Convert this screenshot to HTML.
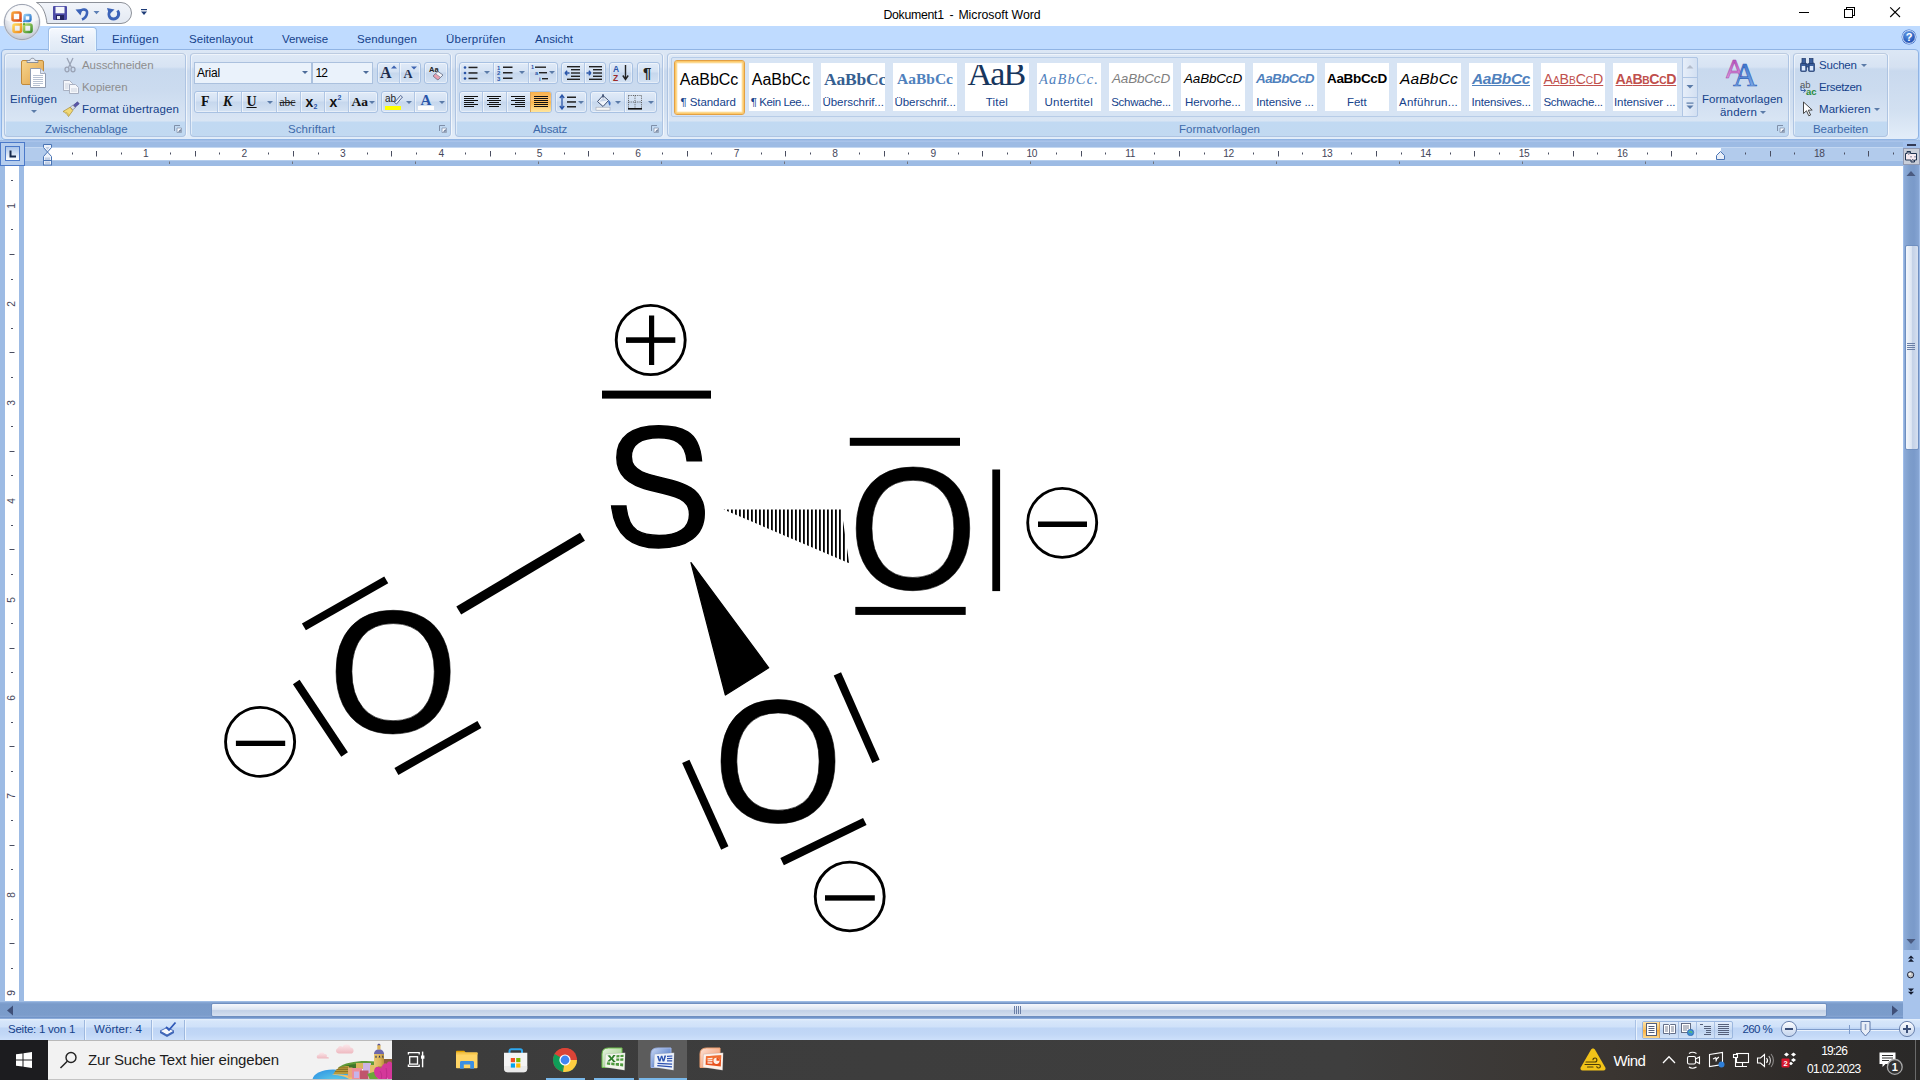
<!DOCTYPE html>
<html lang="de">
<head>
<meta charset="utf-8">
<title>Dokument1 - Microsoft Word</title>
<style>
*{box-sizing:border-box;margin:0;padding:0}
html,body{width:1920px;height:1080px;overflow:hidden;background:#fff;font-family:"Liberation Sans",sans-serif;}
.abs{position:absolute}
#root{position:relative;width:1920px;height:1080px;overflow:hidden;background:#fff}
/* title bar */
#title{position:absolute;left:0;top:0;width:1920px;height:26px;background:#fff}
#title .cap{position:absolute;left:0;width:1920px;top:6px;text-align:center;font-size:12.4px;color:#000;letter-spacing:0px}
/* tab row */
#tabrow{position:absolute;left:0;top:26px;width:1920px;height:24px;background:#bfdbff}
.tab{position:absolute;top:31px;font-size:12.3px;color:#15428b;white-space:nowrap}
#tabsel{position:absolute;left:48px;top:27px;width:48px;height:24px;border:1px solid #a4c2e6;border-bottom:none;border-radius:4px 4px 0 0;background:linear-gradient(#f1f6fc,#dfe9f6)}
/* ribbon */
#ribbon{position:absolute;left:1px;top:49px;width:1918px;height:91px;border:1px solid #8db2e3;border-radius:4px;background:linear-gradient(#dbe6f4 0,#d0def0 30%,#c7d8ed 34%,#d6e3f3 80%,#e6eefa 100%)}
.grp{position:absolute;top:53px;height:84px;border:1px solid #a9c4e4;border-radius:4px;background:linear-gradient(#dde8f6 0,#d3e0f1 16px,#c7d8ed 17px,#d9e5f4 67px,#c1d8f0 68px,#c1d8f0 100%);box-shadow:inset 1px 1px 0 rgba(255,255,255,.55), 1px 0 0 rgba(255,255,255,.6)}
.grp .lbl{position:absolute;left:0;right:0;bottom:1px;height:14px;text-align:center;font-size:11.6px;color:#3e6aaa;line-height:14px;white-space:nowrap}
.t{position:absolute;white-space:nowrap;font-size:11.6px;color:#15428b;line-height:14px}
.dis{color:#8d8d8d}
.launch{position:absolute;width:7px;height:7px;border-left:1px solid #7a8ba5;border-top:1px solid #7a8ba5}
.launch:after{content:"";position:absolute;left:2px;top:2px;width:5px;height:5px;background:linear-gradient(135deg,transparent 40%,#6d7f9b 41%);}
.btnbox{position:absolute;height:22px;border:1px solid #a8c0e0;border-radius:3px;background:linear-gradient(#dfeaf7 0,#d2e0f2 45%,#c5d6ec 50%,#d6e3f4 100%)}
.sep{position:absolute;top:0;width:1px;height:20px;background:#b4c9e6}
.dd{position:absolute;width:0;height:0;border-left:3px solid transparent;border-right:3px solid transparent;border-top:3px solid #5b7ba8}
</style>
</head>
<body>
<div id="root">
<div class="abs" style="left:0px;top:0px;width:1920px;height:26px;background:#fff;"></div>
<div class="t" style="left:883.4px;top:6.5px;height:16px;line-height:16px;font-size:12.3px;color:#000;letter-spacing:-0.280px;">Dokument1</div>
<div class="t" style="left:949.4px;top:6.5px;height:16px;line-height:16px;font-size:12.3px;color:#000;">-</div>
<div class="t" style="left:958.4px;top:6.5px;height:16px;line-height:16px;font-size:12.3px;color:#000;letter-spacing:-0.015px;">Microsoft Word</div>
<svg class="abs" style="left:1790px;top:0px" width="130" height="26" viewBox="0 0 130 26"><g stroke="#000" stroke-width="1" fill="none" shape-rendering="crispEdges"><line x1="9" y1="12.5" x2="19" y2="12.5"/><rect x="54.5" y="9.5" width="7.5" height="7.5"/><path d="M56.5 9.5V7.5H64V15H62"/></g><g stroke="#000" stroke-width="1.1" fill="none"><path d="M100.2 7.3L110 17M110 7.3L100.2 17"/></g></svg>
<div class="abs" style="left:0px;top:26px;width:1920px;height:116px;background:#bfdbff;"></div>
<svg class="abs" style="left:30px;top:0px" width="130" height="26" viewBox="0 0 130 26"><defs><linearGradient id="qg" x1="0" y1="0" x2="0" y2="1"><stop offset="0" stop-color="#f2f5fa"/><stop offset="1" stop-color="#e3e9f2"/></linearGradient></defs><path d="M6.5 2.5H91A10.5 10.5 0 0 1 91 23.5H17C16 15 13.5 6 6.5 2.5Z" fill="url(#qg)" stroke="#8d9199" stroke-width="1"/><g transform="translate(23,6)"><rect x="0" y="0" width="14" height="14" rx="1" fill="#4b4aa6"/><rect x="2.5" y="0.8" width="9" height="6.5" fill="#f4f6fb"/><rect x="3" y="9" width="8" height="5" fill="#23235f"/><rect x="4" y="10" width="3" height="3.2" fill="#e6e8f2"/></g><g fill="none" stroke="#3c63b8" stroke-width="2.6" stroke-linecap="butt"><path d="M49 12.5C52 8 58 9 57 13.5C56.5 16.5 54.5 18.5 52 19.5"/></g><path d="M45.5 9.5L52.5 9L50.5 15.5Z" fill="#3c63b8"/><path d="M63.5 11H69.5L66.5 14.2Z" fill="#5c7fb5"/><g fill="none" stroke="#3c63b8" stroke-width="2.8"><path d="M87.5 10.5C90.5 14.5 87.5 19 83.5 19C79 19 77.5 14 80.5 10.5"/></g><path d="M77 8L84.5 9.5L79 14.5Z" fill="#3c63b8"/><rect x="111" y="9" width="6" height="1.2" fill="#1e3c78"/><path d="M111 11.5H117L114 15Z" fill="#1e3c78"/></svg>
<svg class="abs" style="left:0px;top:0px" width="46" height="46" viewBox="0 0 46 46"><defs><radialGradient id="ob" cx="0.5" cy="0.35" r="0.7"><stop offset="0" stop-color="#ffffff"/><stop offset="0.55" stop-color="#eceef3"/><stop offset="1" stop-color="#b9bfcc"/></radialGradient><linearGradient id="og1" x1="0" y1="0" x2="1" y2="1"><stop offset="0" stop-color="#f7a33a"/><stop offset="1" stop-color="#d9421c"/></linearGradient><linearGradient id="og2" x1="0" y1="0" x2="1" y2="1"><stop offset="0" stop-color="#8cc7f2"/><stop offset="1" stop-color="#2a72c8"/></linearGradient><linearGradient id="og3" x1="0" y1="0" x2="1" y2="1"><stop offset="0" stop-color="#ffd75a"/><stop offset="1" stop-color="#f08a1c"/></linearGradient><linearGradient id="og4" x1="0" y1="0" x2="1" y2="1"><stop offset="0" stop-color="#b9dc6a"/><stop offset="1" stop-color="#3b8f2e"/></linearGradient></defs><circle cx="22" cy="22.5" r="18.6" fill="#d7dbe3" opacity="0.7"/><circle cx="22" cy="22" r="17.6" fill="url(#ob)" stroke="#9ca2b0" stroke-width="1"/><path d="M5.5 20A16.6 16.6 0 0 1 38.5 20C30 24 14 24 5.5 20Z" fill="#fff" opacity="0.55"/><g fill="none" stroke-width="2.6" stroke-linejoin="round"><rect x="12.5" y="12.5" width="8" height="8" rx="1.5" stroke="url(#og1)"/><rect x="24.5" y="15" width="6" height="6" rx="1.2" stroke="url(#og2)" stroke-width="2.4"/><rect x="13.5" y="24.5" width="7.5" height="7.5" rx="1.5" stroke="url(#og3)"/><rect x="24" y="24.5" width="7.5" height="7.5" rx="1.5" stroke="url(#og4)"/></g><circle cx="21" cy="21.2" r="1.1" fill="#e05a2a"/><circle cx="24" cy="21.5" r="1.1" fill="#3d86d6"/><circle cx="21.2" cy="24.2" r="1.1" fill="#f0a020"/><circle cx="24" cy="24.2" r="1.1" fill="#58a838"/></svg>
<div class="abs" style="left:1px;top:49px;width:1918px;height:91px;border:1px solid #90b4e4;border-radius:4px;background:linear-gradient(#dce7f5 0,#d5e1f1 17px,#c9d9ee 21px,#d2e0f1 60px,#dbe7f5 75px,#e4eefa 91px);box-shadow:0 1px 0 #d9f1ff, 0 2px 1px #9cb9e0"></div>
<div class="abs" style="left:48px;top:27px;width:48.5px;height:24px;border:1px solid #9dbde6;border-bottom:none;border-radius:4px 4px 0 0;background:linear-gradient(#f6f9fe,#e6eef8 60%,#dfe9f5);box-shadow:inset 1px 1px 0 #ffffff, inset -1px 0 0 #e6f6ff"></div>
<div class="t" style="left:60.5px;top:31.5px;height:15px;line-height:15px;font-size:11.5px;color:#15428b;letter-spacing:-0.213px;">Start</div>
<div class="t" style="left:112.0px;top:31.5px;height:15px;line-height:15px;font-size:11.5px;color:#15428b;letter-spacing:0.166px;">Einfügen</div>
<div class="t" style="left:189.0px;top:31.5px;height:15px;line-height:15px;font-size:11.5px;color:#15428b;letter-spacing:0.061px;">Seitenlayout</div>
<div class="t" style="left:282.0px;top:31.5px;height:15px;line-height:15px;font-size:11.5px;color:#15428b;letter-spacing:-0.082px;">Verweise</div>
<div class="t" style="left:357.0px;top:31.5px;height:15px;line-height:15px;font-size:11.5px;color:#15428b;letter-spacing:0.134px;">Sendungen</div>
<div class="t" style="left:446.0px;top:31.5px;height:15px;line-height:15px;font-size:11.5px;color:#15428b;letter-spacing:0.220px;">Überprüfen</div>
<div class="t" style="left:535.0px;top:31.5px;height:15px;line-height:15px;font-size:11.5px;color:#15428b;letter-spacing:0.042px;">Ansicht</div>
<svg class="abs" style="left:1900px;top:29px" width="18" height="16" viewBox="0 0 18 16"><defs><radialGradient id="hg" cx="0.4" cy="0.3" r="0.8"><stop offset="0" stop-color="#5f9be8"/><stop offset="1" stop-color="#1440a8"/></radialGradient></defs><circle cx="9" cy="8" r="7.4" fill="#3a6cc8"/><circle cx="9" cy="8" r="6.4" fill="url(#hg)" stroke="#eef4fd" stroke-width="0.9"/><text x="9" y="12" font-family="Liberation Sans,sans-serif" font-weight="bold" font-size="11" fill="#fff" text-anchor="middle">?</text></svg>
<div class="abs" style="left:0px;top:140px;width:1920px;height:2px;background:linear-gradient(#9fbbe3,#abc6ec);"></div>
<div class="abs" style="left:4px;top:53px;width:182px;height:84px;border:1px solid #aec4e2;border-top-color:#bccbe0;border-radius:4px;background:linear-gradient(#dee9f6 0,#d7e3f3 13px,#c8d9ee 15px,#cbdbef 36px,#d9e5f4 67px,#c1d9f2 68px,#c2d9f1 84px);box-shadow:1px 0 0 rgba(255,255,255,.65),inset 1px 1px 0 rgba(255,255,255,.5)"></div>
<div class="t" style="left:45.0px;top:121.8px;height:15px;line-height:15px;font-size:11.5px;color:#3e6aaa;letter-spacing:-0.042px;">Zwischenablage</div>
<svg class="abs" style="left:174px;top:125px" width="9" height="9" viewBox="0 0 9 9"><path d="M0.5 6V0.5H6" fill="none" stroke="#7f8fa8" stroke-width="1"/><path d="M3 3H7.5V7.5H3Z" fill="#f8fbff" stroke="#8795ad" stroke-width="0.8"/><path d="M4 6.8L6.8 4V6.8Z" fill="#5c6f90"/></svg>
<div class="abs" style="left:190px;top:53px;width:261px;height:84px;border:1px solid #aec4e2;border-top-color:#bccbe0;border-radius:4px;background:linear-gradient(#dee9f6 0,#d7e3f3 13px,#c8d9ee 15px,#cbdbef 36px,#d9e5f4 67px,#c1d9f2 68px,#c2d9f1 84px);box-shadow:1px 0 0 rgba(255,255,255,.65),inset 1px 1px 0 rgba(255,255,255,.5)"></div>
<div class="t" style="left:288.0px;top:121.8px;height:15px;line-height:15px;font-size:11.5px;color:#3e6aaa;letter-spacing:0.102px;">Schriftart</div>
<svg class="abs" style="left:439px;top:125px" width="9" height="9" viewBox="0 0 9 9"><path d="M0.5 6V0.5H6" fill="none" stroke="#7f8fa8" stroke-width="1"/><path d="M3 3H7.5V7.5H3Z" fill="#f8fbff" stroke="#8795ad" stroke-width="0.8"/><path d="M4 6.8L6.8 4V6.8Z" fill="#5c6f90"/></svg>
<div class="abs" style="left:455px;top:53px;width:208px;height:84px;border:1px solid #aec4e2;border-top-color:#bccbe0;border-radius:4px;background:linear-gradient(#dee9f6 0,#d7e3f3 13px,#c8d9ee 15px,#cbdbef 36px,#d9e5f4 67px,#c1d9f2 68px,#c2d9f1 84px);box-shadow:1px 0 0 rgba(255,255,255,.65),inset 1px 1px 0 rgba(255,255,255,.5)"></div>
<div class="t" style="left:533.0px;top:121.8px;height:15px;line-height:15px;font-size:11.5px;color:#3e6aaa;letter-spacing:-0.190px;">Absatz</div>
<svg class="abs" style="left:651px;top:125px" width="9" height="9" viewBox="0 0 9 9"><path d="M0.5 6V0.5H6" fill="none" stroke="#7f8fa8" stroke-width="1"/><path d="M3 3H7.5V7.5H3Z" fill="#f8fbff" stroke="#8795ad" stroke-width="0.8"/><path d="M4 6.8L6.8 4V6.8Z" fill="#5c6f90"/></svg>
<div class="abs" style="left:667px;top:53px;width:1122px;height:84px;border:1px solid #aec4e2;border-top-color:#bccbe0;border-radius:4px;background:linear-gradient(#dee9f6 0,#d7e3f3 13px,#c8d9ee 15px,#cbdbef 36px,#d9e5f4 67px,#c1d9f2 68px,#c2d9f1 84px);box-shadow:1px 0 0 rgba(255,255,255,.65),inset 1px 1px 0 rgba(255,255,255,.5)"></div>
<div class="t" style="left:1179.0px;top:121.8px;height:15px;line-height:15px;font-size:11.5px;color:#3e6aaa;letter-spacing:0.036px;">Formatvorlagen</div>
<svg class="abs" style="left:1777px;top:125px" width="9" height="9" viewBox="0 0 9 9"><path d="M0.5 6V0.5H6" fill="none" stroke="#7f8fa8" stroke-width="1"/><path d="M3 3H7.5V7.5H3Z" fill="#f8fbff" stroke="#8795ad" stroke-width="0.8"/><path d="M4 6.8L6.8 4V6.8Z" fill="#5c6f90"/></svg>
<div class="abs" style="left:1793px;top:53px;width:95px;height:84px;border:1px solid #aec4e2;border-top-color:#bccbe0;border-radius:4px;background:linear-gradient(#dee9f6 0,#d7e3f3 13px,#c8d9ee 15px,#cbdbef 36px,#d9e5f4 67px,#c1d9f2 68px,#c2d9f1 84px);box-shadow:1px 0 0 rgba(255,255,255,.65),inset 1px 1px 0 rgba(255,255,255,.5)"></div>
<div class="t" style="left:1813.0px;top:121.8px;height:15px;line-height:15px;font-size:11.5px;color:#3e6aaa;letter-spacing:-0.059px;">Bearbeiten</div>
<svg class="abs" style="left:19px;top:55px" width="30" height="36" viewBox="0 0 30 36"><defs><linearGradient id="cb" x1="0" y1="0" x2="1" y2="1"><stop offset="0" stop-color="#f6d58e"/><stop offset="1" stop-color="#e2a34a"/></linearGradient></defs><rect x="2.5" y="5.5" width="22" height="24" rx="1.5" fill="url(#cb)" stroke="#c08a3c" stroke-width="1"/><path d="M8 7.5V5.5H11C11 2.5 16 2.5 16 5.5H19V7.5Z" fill="#e9ecf2" stroke="#7f8794" stroke-width="0.9"/><path d="M11.5 13.5H21.5L26.5 18.5V32.5H11.5Z" fill="#fff" stroke="#8f9bb0" stroke-width="1"/><path d="M21.5 13.5V18.5H26.5" fill="#dde4ef" stroke="#8f9bb0" stroke-width="0.8"/><g stroke="#b8c2d2" stroke-width="1"><path d="M14 20.5H24M14 22.5H24M14 24.5H24M14 26.5H24M14 28.5H24M14 30.5H21"/></g></svg>
<div class="t" style="left:10.0px;top:92.0px;height:15px;line-height:15px;font-size:11.5px;color:#15428b;letter-spacing:0.203px;">Einfügen</div>
<div class="abs" style="left:30.5px;top:110px;width:0;height:0;border-left:3px solid transparent;border-right:3px solid transparent;border-top:3px solid #5b7ba8"></div>
<svg class="abs" style="left:63px;top:57px" width="14" height="16" viewBox="0 0 14 16"><g fill="none" stroke="#9aa3b5" stroke-width="1.3"><path d="M4 1L8.5 10.5M10 1L5.5 10.5"/><ellipse cx="4" cy="12.5" rx="2" ry="2.3"/><ellipse cx="10" cy="12.5" rx="2" ry="2.3"/></g></svg>
<div class="t" style="left:82.0px;top:57.5px;height:15px;line-height:15px;font-size:11.5px;color:#8e8e8e;letter-spacing:-0.060px;">Ausschneiden</div>
<svg class="abs" style="left:62px;top:79px" width="18" height="16" viewBox="0 0 18 16"><g fill="#f5f7fb" stroke="#a9b1c2" stroke-width="1"><path d="M1.5 1.5H7.5L10.5 4.5V11.5H1.5Z"/><path d="M7.5 5.5H13.5L16.5 8.5V14.5H7.5Z"/></g><g stroke="#c3cad8" stroke-width="0.8"><path d="M3 5H8M3 7H6.5M3 9H6.5M9 10H15M9 12H15"/></g></svg>
<div class="t" style="left:82.0px;top:79.5px;height:15px;line-height:15px;font-size:11.5px;color:#8e8e8e;letter-spacing:-0.064px;">Kopieren</div>
<svg class="abs" style="left:62px;top:101px" width="18" height="17" viewBox="0 0 18 17"><path d="M11 4.5L15.5 0.8L17.2 2.8L12.8 6.5Z" fill="#5a55a8" stroke="#3b3a80" stroke-width="0.6"/><path d="M8.2 6.2L11 4L13.3 6.8L10.5 9Z" fill="#d9dce6" stroke="#70788c" stroke-width="0.6"/><path d="M1 10.5L8.2 6.2L10.8 9.6L6.5 15.5C5 13 3.5 11.5 1 10.5Z" fill="#f1d978" stroke="#a88a2c" stroke-width="0.7"/><path d="M4 11L7.5 14" stroke="#c4a846" stroke-width="0.7"/></svg>
<div class="t" style="left:82.0px;top:101.5px;height:15px;line-height:15px;font-size:11.5px;color:#15428b;letter-spacing:0.108px;">Format übertragen</div>
<div class="abs" style="left:194px;top:62px;width:117.5px;height:21.5px;border:1px solid #abc1de;background:#eaf2fb;"></div>
<div class="abs" style="left:311.5px;top:62px;width:61.5px;height:21.5px;border:1px solid #abc1de;background:#eaf2fb;"></div>
<div class="t" style="left:197.0px;top:64.5px;height:16px;line-height:16px;font-size:12px;color:#000;letter-spacing:-0.203px;">Arial</div>
<div class="t" style="left:315.5px;top:64.5px;height:16px;line-height:16px;font-size:12px;color:#000;letter-spacing:-0.922px;">12</div>
<div class="abs" style="left:301.5px;top:71px;width:0;height:0;border-left:3px solid transparent;border-right:3px solid transparent;border-top:3px solid #4d6c9a"></div>
<div class="abs" style="left:362.5px;top:71px;width:0;height:0;border-left:3px solid transparent;border-right:3px solid transparent;border-top:3px solid #4d6c9a"></div>
<div class="abs" style="left:376.5px;top:62px;width:44.0px;height:21.5px;border:1px solid #a8c1e2;border-radius:3px;background:linear-gradient(#e1ebf8 0,#d3e1f3 45%,#c6d7ed 50%,#d4e2f3 100%);box-shadow:inset 0 0 0 1px rgba(255,255,255,.45)"></div>
<div class="abs" style="left:398.5px;top:63px;width:1px;height:19.5px;background:#b1c7e5;box-shadow:1px 0 0 rgba(255,255,255,.55)"></div>
<div class="t" style="left:380.0px;top:62.0px;height:21px;line-height:21px;font-size:16px;color:#1f2d4d;font-family:'Liberation Serif',serif;font-weight:bold;">A</div>
<svg class="abs" style="left:391px;top:65px" width="6" height="4" viewBox="0 0 6 4"><path d="M0 3.5L3 0.5L6 3.5Z" fill="#3d63b0"/></svg>
<div class="t" style="left:403.5px;top:65.5px;height:16px;line-height:16px;font-size:12.5px;color:#1f2d4d;font-family:'Liberation Serif',serif;font-weight:bold;">A</div>
<svg class="abs" style="left:411px;top:66px" width="6" height="4" viewBox="0 0 6 4"><path d="M0 0.5L3 3.5L6 0.5Z" fill="#3d63b0"/></svg>
<div class="abs" style="left:424px;top:62px;width:23.5px;height:21.5px;border:1px solid #a8c1e2;border-radius:3px;background:linear-gradient(#e1ebf8 0,#d3e1f3 45%,#c6d7ed 50%,#d4e2f3 100%);box-shadow:inset 0 0 0 1px rgba(255,255,255,.45)"></div>
<svg class="abs" style="left:427px;top:64px" width="18" height="18" viewBox="0 0 18 18"><text x="2" y="8" font-size="7.5" font-family="Liberation Sans,sans-serif" fill="#222" font-weight="bold">Aa</text><path d="M6 12L11 7.5L16 11L11 16Z" fill="#f4f5f8" stroke="#6f7890" stroke-width="0.9"/><path d="M6 12L8.5 9.8L13.5 13.3L11 16Z" fill="#e9a0b0" stroke="#6f7890" stroke-width="0.6"/></svg>
<div class="abs" style="left:194px;top:91px;width:183.5px;height:21.5px;border:1px solid #a8c1e2;border-radius:3px;background:linear-gradient(#e1ebf8 0,#d3e1f3 45%,#c6d7ed 50%,#d4e2f3 100%);box-shadow:inset 0 0 0 1px rgba(255,255,255,.45)"></div>
<div class="abs" style="left:217px;top:92px;width:1px;height:19.5px;background:#b1c7e5;box-shadow:1px 0 0 rgba(255,255,255,.55)"></div>
<div class="abs" style="left:240.5px;top:92px;width:1px;height:19.5px;background:#b1c7e5;box-shadow:1px 0 0 rgba(255,255,255,.55)"></div>
<div class="abs" style="left:275.5px;top:92px;width:1px;height:19.5px;background:#b1c7e5;box-shadow:1px 0 0 rgba(255,255,255,.55)"></div>
<div class="abs" style="left:299.5px;top:92px;width:1px;height:19.5px;background:#b1c7e5;box-shadow:1px 0 0 rgba(255,255,255,.55)"></div>
<div class="abs" style="left:323.5px;top:92px;width:1px;height:19.5px;background:#b1c7e5;box-shadow:1px 0 0 rgba(255,255,255,.55)"></div>
<div class="abs" style="left:347.5px;top:92px;width:1px;height:19.5px;background:#b1c7e5;box-shadow:1px 0 0 rgba(255,255,255,.55)"></div>
<div class="t" style="left:201.0px;top:93.0px;height:18px;line-height:18px;font-size:14px;color:#111;font-family:'Liberation Serif',serif;font-weight:bold;">F</div>
<div class="t" style="left:223.0px;top:93.0px;height:18px;line-height:18px;font-size:14px;color:#111;font-family:'Liberation Serif',serif;font-weight:bold;font-style:italic;">K</div>
<div class="t" style="left:246.5px;top:93.0px;height:18px;line-height:18px;font-size:14px;color:#111;font-family:'Liberation Serif',serif;font-weight:bold;text-decoration:underline;">U</div>
<div class="abs" style="left:266.5px;top:100.5px;width:0;height:0;border-left:3px solid transparent;border-right:3px solid transparent;border-top:3px solid #5b7ba8"></div>
<div class="t" style="left:279.5px;top:94.5px;height:15px;line-height:15px;font-size:11.5px;color:#222;font-family:'Liberation Serif',serif;text-decoration:line-through;">abc</div>
<div class="t" style="left:305.5px;top:93.0px;height:18px;line-height:18px;font-size:14px;color:#111;font-weight:bold;">x</div>
<div class="t" style="left:313.5px;top:101.5px;height:9px;line-height:9px;font-size:7px;color:#2a55a8;font-weight:bold;">2</div>
<div class="t" style="left:329.5px;top:93.0px;height:18px;line-height:18px;font-size:14px;color:#111;font-weight:bold;">x</div>
<div class="t" style="left:337.5px;top:92.5px;height:9px;line-height:9px;font-size:7px;color:#2a55a8;font-weight:bold;">2</div>
<div class="t" style="left:351.5px;top:93.0px;height:18px;line-height:18px;font-size:13.5px;color:#111;font-family:'Liberation Serif',serif;font-weight:bold;">Aa</div>
<div class="abs" style="left:369px;top:100.5px;width:0;height:0;border-left:3px solid transparent;border-right:3px solid transparent;border-top:3px solid #5b7ba8"></div>
<div class="abs" style="left:381px;top:91px;width:66.5px;height:21.5px;border:1px solid #a8c1e2;border-radius:3px;background:linear-gradient(#e1ebf8 0,#d3e1f3 45%,#c6d7ed 50%,#d4e2f3 100%);box-shadow:inset 0 0 0 1px rgba(255,255,255,.45)"></div>
<div class="abs" style="left:413.5px;top:92px;width:1px;height:19.5px;background:#b1c7e5;box-shadow:1px 0 0 rgba(255,255,255,.55)"></div>
<div class="t" style="left:385.0px;top:92.0px;height:13px;line-height:13px;font-size:10px;color:#222;">ab</div>
<svg class="abs" style="left:393px;top:93px" width="10" height="12" viewBox="0 0 10 12"><path d="M1.5 9.5L7.5 2.5L9.5 4L3.5 11Z" fill="#e8eef8" stroke="#4a5f8a" stroke-width="0.9"/></svg>
<div class="abs" style="left:385px;top:106px;width:16px;height:4px;background:#ffff00;"></div>
<div class="abs" style="left:405.5px;top:100.5px;width:0;height:0;border-left:3px solid transparent;border-right:3px solid transparent;border-top:3px solid #5b7ba8"></div>
<div class="t" style="left:420.5px;top:89.5px;height:20px;line-height:20px;font-size:15px;color:#2a55a8;font-family:'Liberation Serif',serif;font-weight:bold;">A</div>
<div class="abs" style="left:418px;top:106px;width:16px;height:4px;background:#fdfdfd;box-shadow:0 0 0 0.5px #d5dfef"></div>
<div class="abs" style="left:438.5px;top:100.5px;width:0;height:0;border-left:3px solid transparent;border-right:3px solid transparent;border-top:3px solid #5b7ba8"></div>
<div class="abs" style="left:459px;top:62px;width:98.5px;height:21.5px;border:1px solid #a8c1e2;border-radius:3px;background:linear-gradient(#e1ebf8 0,#d3e1f3 45%,#c6d7ed 50%,#d4e2f3 100%);box-shadow:inset 0 0 0 1px rgba(255,255,255,.45)"></div>
<div class="abs" style="left:492.5px;top:63px;width:1px;height:19.5px;background:#b1c7e5;box-shadow:1px 0 0 rgba(255,255,255,.55)"></div>
<div class="abs" style="left:527.5px;top:63px;width:1px;height:19.5px;background:#b1c7e5;box-shadow:1px 0 0 rgba(255,255,255,.55)"></div>
<svg class="abs" style="left:463px;top:65px" width="16" height="16" viewBox="0 0 16 16"><circle cx="2" cy="2.5" r="1.3" fill="#2a55a8"/><rect x="5.5" y="1.7" width="9" height="1.5" fill="#222"/><circle cx="2" cy="8" r="1.3" fill="#2a55a8"/><rect x="5.5" y="7.2" width="9" height="1.5" fill="#222"/><circle cx="2" cy="13.5" r="1.3" fill="#2a55a8"/><rect x="5.5" y="12.7" width="9" height="1.5" fill="#222"/></svg>
<div class="abs" style="left:483.5px;top:71px;width:0;height:0;border-left:3px solid transparent;border-right:3px solid transparent;border-top:3px solid #5b7ba8"></div>
<svg class="abs" style="left:497px;top:64px" width="18" height="18" viewBox="0 0 18 18"><text x="0" y="5.7" font-size="6" font-weight="bold" font-family="Liberation Sans,sans-serif" fill="#2a55a8">1</text><rect x="6" y="2.5" width="9.5" height="1.5" fill="#222"/><text x="0" y="11.2" font-size="6" font-weight="bold" font-family="Liberation Sans,sans-serif" fill="#2a55a8">2</text><rect x="6" y="8" width="9.5" height="1.5" fill="#222"/><text x="0" y="16.7" font-size="6" font-weight="bold" font-family="Liberation Sans,sans-serif" fill="#2a55a8">3</text><rect x="6" y="13.5" width="9.5" height="1.5" fill="#222"/></svg>
<div class="abs" style="left:518.5px;top:71px;width:0;height:0;border-left:3px solid transparent;border-right:3px solid transparent;border-top:3px solid #5b7ba8"></div>
<svg class="abs" style="left:531px;top:64px" width="20" height="18" viewBox="0 0 20 18"><text x="0" y="5" font-size="5.5" font-weight="bold" font-family="Liberation Sans,sans-serif" fill="#2a55a8">1</text><rect x="4" y="2.5" width="11" height="1.4" fill="#222"/><text x="4" y="11" font-size="5.5" font-weight="bold" font-family="Liberation Sans,sans-serif" fill="#2a55a8">a</text><rect x="8" y="8" width="8" height="1.4" fill="#222"/><text x="8" y="17" font-size="5.5" font-weight="bold" font-family="Liberation Sans,sans-serif" fill="#2a55a8">i</text><rect x="11" y="14" width="6" height="1.4" fill="#222"/></svg>
<div class="abs" style="left:548.5px;top:71px;width:0;height:0;border-left:3px solid transparent;border-right:3px solid transparent;border-top:3px solid #5b7ba8"></div>
<div class="abs" style="left:561px;top:62px;width:44.5px;height:21.5px;border:1px solid #a8c1e2;border-radius:3px;background:linear-gradient(#e1ebf8 0,#d3e1f3 45%,#c6d7ed 50%,#d4e2f3 100%);box-shadow:inset 0 0 0 1px rgba(255,255,255,.45)"></div>
<div class="abs" style="left:583.5px;top:63px;width:1px;height:19.5px;background:#b1c7e5;box-shadow:1px 0 0 rgba(255,255,255,.55)"></div>
<svg class="abs" style="left:564px;top:65px" width="18" height="16" viewBox="0 0 18 16"><path d="M5.5 8L1 8M1 8L3.2 5.8M1 8L3.2 10.2" stroke="#2a55a8" stroke-width="1.4" fill="none"/><rect x="3" y="1" width="13" height="1.4" fill="#222"/><rect x="7" y="4" width="9" height="1.4" fill="#222"/><rect x="7" y="7.3" width="9" height="1.4" fill="#222"/><rect x="7" y="10.6" width="9" height="1.4" fill="#222"/><rect x="3" y="13.6" width="13" height="1.4" fill="#222"/></svg>
<svg class="abs" style="left:586px;top:65px" width="18" height="16" viewBox="0 0 18 16"><path d="M0.5 8L5 8M5 8L2.8 5.8M5 8L2.8 10.2" stroke="#2a55a8" stroke-width="1.4" fill="none"/><rect x="3" y="1" width="13" height="1.4" fill="#222"/><rect x="7" y="4" width="9" height="1.4" fill="#222"/><rect x="7" y="7.3" width="9" height="1.4" fill="#222"/><rect x="7" y="10.6" width="9" height="1.4" fill="#222"/><rect x="3" y="13.6" width="13" height="1.4" fill="#222"/></svg>
<div class="abs" style="left:609px;top:62px;width:23.5px;height:21.5px;border:1px solid #a8c1e2;border-radius:3px;background:linear-gradient(#e1ebf8 0,#d3e1f3 45%,#c6d7ed 50%,#d4e2f3 100%);box-shadow:inset 0 0 0 1px rgba(255,255,255,.45)"></div>
<div class="t" style="left:613.0px;top:63.5px;height:10px;line-height:10px;font-size:8.5px;color:#2a55a8;font-weight:bold;">A</div>
<div class="t" style="left:613.0px;top:72.5px;height:10px;line-height:10px;font-size:8.5px;color:#9c2a2a;font-weight:bold;">Z</div>
<svg class="abs" style="left:622px;top:65px" width="8" height="16" viewBox="0 0 8 16"><path d="M3.5 0V14M0.8 10.5L3.5 14.5L6.2 10.5" fill="none" stroke="#222" stroke-width="1.4"/></svg>
<div class="abs" style="left:637px;top:62px;width:23px;height:21.5px;border:1px solid #a8c1e2;border-radius:3px;background:linear-gradient(#e1ebf8 0,#d3e1f3 45%,#c6d7ed 50%,#d4e2f3 100%);box-shadow:inset 0 0 0 1px rgba(255,255,255,.45)"></div>
<div class="t" style="left:643.0px;top:62.5px;height:20px;line-height:20px;font-size:15px;color:#222;font-weight:bold;">¶</div>
<div class="abs" style="left:459px;top:91px;width:92.5px;height:21.5px;border:1px solid #a8c1e2;border-radius:3px;background:linear-gradient(#e1ebf8 0,#d3e1f3 45%,#c6d7ed 50%,#d4e2f3 100%);box-shadow:inset 0 0 0 1px rgba(255,255,255,.45)"></div>
<div class="abs" style="left:482px;top:92px;width:1px;height:19.5px;background:#b1c7e5;box-shadow:1px 0 0 rgba(255,255,255,.55)"></div>
<div class="abs" style="left:505.5px;top:92px;width:1px;height:19.5px;background:#b1c7e5;box-shadow:1px 0 0 rgba(255,255,255,.55)"></div>
<div class="abs" style="left:529.5px;top:92px;width:21px;height:19.5px;background:linear-gradient(#f8b04a,#fcc577 40%,#fbb84e 50%,#ffe59c);border-left:1px solid #d9a257;border-radius:0 2px 2px 0"></div>
<svg class="abs" style="left:464px;top:96px" width="14" height="13" viewBox="0 0 14 13"><rect x="0" y="0" width="14" height="1" fill="#111" shape-rendering="crispEdges"/><rect x="0" y="2" width="10" height="1" fill="#111" shape-rendering="crispEdges"/><rect x="0" y="4" width="14" height="1" fill="#111" shape-rendering="crispEdges"/><rect x="0" y="6" width="10" height="1" fill="#111" shape-rendering="crispEdges"/><rect x="0" y="8" width="14" height="1" fill="#111" shape-rendering="crispEdges"/><rect x="0" y="10" width="10" height="1" fill="#111" shape-rendering="crispEdges"/></svg>
<svg class="abs" style="left:487px;top:96px" width="14" height="13" viewBox="0 0 14 13"><rect x="0" y="0" width="14" height="1" fill="#111" shape-rendering="crispEdges"/><rect x="2" y="2" width="10" height="1" fill="#111" shape-rendering="crispEdges"/><rect x="0" y="4" width="14" height="1" fill="#111" shape-rendering="crispEdges"/><rect x="2" y="6" width="10" height="1" fill="#111" shape-rendering="crispEdges"/><rect x="0" y="8" width="14" height="1" fill="#111" shape-rendering="crispEdges"/><rect x="2" y="10" width="10" height="1" fill="#111" shape-rendering="crispEdges"/></svg>
<svg class="abs" style="left:511px;top:96px" width="14" height="13" viewBox="0 0 14 13"><rect x="0" y="0" width="14" height="1" fill="#111" shape-rendering="crispEdges"/><rect x="4" y="2" width="10" height="1" fill="#111" shape-rendering="crispEdges"/><rect x="0" y="4" width="14" height="1" fill="#111" shape-rendering="crispEdges"/><rect x="4" y="6" width="10" height="1" fill="#111" shape-rendering="crispEdges"/><rect x="0" y="8" width="14" height="1" fill="#111" shape-rendering="crispEdges"/><rect x="4" y="10" width="10" height="1" fill="#111" shape-rendering="crispEdges"/></svg>
<svg class="abs" style="left:534px;top:96px" width="14" height="13" viewBox="0 0 14 13"><rect x="0" y="0" width="14" height="1" fill="#111" shape-rendering="crispEdges"/><rect x="0" y="2" width="14" height="1" fill="#111" shape-rendering="crispEdges"/><rect x="0" y="4" width="14" height="1" fill="#111" shape-rendering="crispEdges"/><rect x="0" y="6" width="14" height="1" fill="#111" shape-rendering="crispEdges"/><rect x="0" y="8" width="14" height="1" fill="#111" shape-rendering="crispEdges"/><rect x="0" y="10" width="14" height="1" fill="#111" shape-rendering="crispEdges"/></svg>
<div class="abs" style="left:555px;top:91px;width:32px;height:21.5px;border:1px solid #a8c1e2;border-radius:3px;background:linear-gradient(#e1ebf8 0,#d3e1f3 45%,#c6d7ed 50%,#d4e2f3 100%);box-shadow:inset 0 0 0 1px rgba(255,255,255,.45)"></div>
<svg class="abs" style="left:559px;top:94px" width="22" height="16" viewBox="0 0 22 16"><path d="M3 1.5V14.5M0.8 4L3 1L5.2 4M0.8 12L3 15L5.2 12" fill="none" stroke="#2a55a8" stroke-width="1.3"/><rect x="8" y="2.5" width="9" height="1.5" fill="#222"/><rect x="8" y="7.2" width="9" height="1.5" fill="#222"/><rect x="8" y="12" width="9" height="1.5" fill="#222"/></svg>
<div class="abs" style="left:577.5px;top:100.5px;width:0;height:0;border-left:3px solid transparent;border-right:3px solid transparent;border-top:3px solid #5b7ba8"></div>
<div class="abs" style="left:590px;top:91px;width:66.5px;height:21.5px;border:1px solid #a8c1e2;border-radius:3px;background:linear-gradient(#e1ebf8 0,#d3e1f3 45%,#c6d7ed 50%,#d4e2f3 100%);box-shadow:inset 0 0 0 1px rgba(255,255,255,.45)"></div>
<div class="abs" style="left:623.5px;top:92px;width:1px;height:19.5px;background:#b1c7e5;box-shadow:1px 0 0 rgba(255,255,255,.55)"></div>
<svg class="abs" style="left:594px;top:93px" width="20" height="18" viewBox="0 0 20 18"><path d="M3.5 8.5L9 2.5L14.5 7.5L9 13.5Z" fill="#f3f6fb" stroke="#3a4c70" stroke-width="1"/><path d="M5 8.8L9.2 4.4L13 7.7Z" fill="#c9d6ea"/><path d="M9 4.5V1.2" stroke="#3a4c70" stroke-width="1.6"/><path d="M14.3 7.3C17.3 8.5 16.8 11.5 15.8 12.8C14.5 11.5 14.2 9.5 14.3 7.3Z" fill="#3f6fc0"/><rect x="2" y="14.2" width="14" height="3" fill="#f4f4f4" stroke="#a0a8b8" stroke-width="0.6"/></svg>
<div class="abs" style="left:614.5px;top:100.5px;width:0;height:0;border-left:3px solid transparent;border-right:3px solid transparent;border-top:3px solid #5b7ba8"></div>
<svg class="abs" style="left:628px;top:95px" width="15" height="16" viewBox="0 0 15 16"><g stroke="#555" stroke-width="1" stroke-dasharray="1 1.2" fill="none"><path d="M0.5 0.5H13.5M0.5 0.5V13M13.5 0.5V13M7 0.5V13M0.5 7H13.5"/></g><rect x="0" y="13" width="14" height="1.6" fill="#111"/></svg>
<div class="abs" style="left:647.5px;top:100.5px;width:0;height:0;border-left:3px solid transparent;border-right:3px solid transparent;border-top:3px solid #5b7ba8"></div>
<div class="abs" style="left:671px;top:57px;width:1027px;height:60px;border:1px solid #b7cce7;background:#d7e4f4;border-radius:2px"></div>
<div class="abs" style="left:674px;top:59.5px;width:70.5px;height:55.5px;border-radius:3px;border:1px solid #e2a044;background:#fff;box-shadow:inset 0 0 0 1.5px #fcc96b, inset 0 0 0 2.5px #fde9b9"></div>
<div class="abs" style="left:677px;top:63px;width:64px;height:30px;overflow:hidden"><div class="t" style="left:2.8px;top:5.5px;height:21px;line-height:21px;font-size:16px;color:#000;letter-spacing:-0.036px;">AaBbCc</div></div>
<div class="t" style="left:680.5px;top:94.5px;height:15px;line-height:15px;font-size:11.5px;color:#15428b;letter-spacing:-0.075px;">¶ Standard</div>
<div class="abs" style="left:749px;top:63px;width:64px;height:48px;background:#fff;"></div>
<div class="abs" style="left:749px;top:63px;width:64px;height:30px;overflow:hidden"><div class="t" style="left:2.8px;top:5.5px;height:21px;line-height:21px;font-size:16px;color:#000;letter-spacing:-0.036px;">AaBbCc</div></div>
<div class="t" style="left:750.8px;top:94.5px;height:15px;line-height:15px;font-size:11.5px;color:#15428b;letter-spacing:-0.427px;">¶ Kein Lee...</div>
<div class="abs" style="left:821px;top:63px;width:64px;height:48px;background:#fff;"></div>
<div class="abs" style="left:821px;top:63px;width:64px;height:30px;overflow:hidden"><div class="t" style="left:3.0px;top:4.5px;height:23px;line-height:23px;font-size:17.5px;color:#365f91;font-family:'Liberation Serif',serif;font-weight:bold;letter-spacing:-0.201px;">AaBbCc</div></div>
<div class="t" style="left:822.5px;top:94.5px;height:15px;line-height:15px;font-size:11.5px;color:#15428b;letter-spacing:-0.054px;">Überschrif...</div>
<div class="abs" style="left:893px;top:63px;width:64px;height:48px;background:#fff;"></div>
<div class="abs" style="left:893px;top:63px;width:64px;height:30px;overflow:hidden"><div class="t" style="left:4.0px;top:6.0px;height:20px;line-height:20px;font-size:15.5px;color:#4f81bd;font-family:'Liberation Serif',serif;font-weight:bold;letter-spacing:0.005px;">AaBbCc</div></div>
<div class="t" style="left:894.5px;top:94.5px;height:15px;line-height:15px;font-size:11.5px;color:#15428b;letter-spacing:-0.054px;">Überschrif...</div>
<div class="abs" style="left:965px;top:63px;width:64px;height:48px;background:#fff;"></div>
<div class="abs" style="left:965px;top:65px;width:64px;height:28px;overflow:hidden"><div class="t" style="left:2.5px;top:-11.5px;height:40px;line-height:40px;font-size:34px;color:#17365d;font-family:'Liberation Serif',serif;letter-spacing:-1.771px;">AaB</div></div>
<div class="t" style="left:985.8px;top:94.5px;height:15px;line-height:15px;font-size:11.5px;color:#15428b;letter-spacing:0.188px;">Titel</div>
<div class="abs" style="left:1037px;top:63px;width:64px;height:48px;background:#fff;"></div>
<div class="abs" style="left:1037px;top:63px;width:64px;height:30px;overflow:hidden"><div class="t" style="left:2.0px;top:6.5px;height:19px;line-height:19px;font-size:14.5px;color:#4f81bd;font-family:'Liberation Serif',serif;font-style:italic;letter-spacing:1.150px;">AaBbCc.</div></div>
<div class="t" style="left:1044.5px;top:94.5px;height:15px;line-height:15px;font-size:11.5px;color:#15428b;letter-spacing:0.250px;">Untertitel</div>
<div class="abs" style="left:1109px;top:63px;width:64px;height:48px;background:#fff;"></div>
<div class="abs" style="left:1109px;top:63px;width:64px;height:30px;overflow:hidden"><div class="t" style="left:3.0px;top:7.0px;height:18px;line-height:18px;font-size:13.5px;color:#7f7f7f;font-style:italic;letter-spacing:-0.183px;">AaBbCcD</div></div>
<div class="t" style="left:1111.2px;top:94.5px;height:15px;line-height:15px;font-size:11.5px;color:#15428b;letter-spacing:-0.283px;">Schwache...</div>
<div class="abs" style="left:1181px;top:63px;width:64px;height:48px;background:#fff;"></div>
<div class="abs" style="left:1181px;top:63px;width:64px;height:30px;overflow:hidden"><div class="t" style="left:3.0px;top:7.0px;height:18px;line-height:18px;font-size:13.5px;color:#000;font-style:italic;letter-spacing:-0.183px;">AaBbCcD</div></div>
<div class="t" style="left:1185.0px;top:94.5px;height:15px;line-height:15px;font-size:11.5px;color:#15428b;letter-spacing:-0.122px;">Hervorhe...</div>
<div class="abs" style="left:1253px;top:63px;width:64px;height:48px;background:#fff;"></div>
<div class="abs" style="left:1253px;top:63px;width:64px;height:30px;overflow:hidden"><div class="t" style="left:3.0px;top:7.0px;height:18px;line-height:18px;font-size:13.5px;color:#4f81bd;font-weight:bold;font-style:italic;letter-spacing:-0.612px;">AaBbCcD</div></div>
<div class="t" style="left:1256.2px;top:94.5px;height:15px;line-height:15px;font-size:11.5px;color:#15428b;letter-spacing:-0.096px;">Intensive ...</div>
<div class="abs" style="left:1325px;top:63px;width:64px;height:48px;background:#fff;"></div>
<div class="abs" style="left:1325px;top:63px;width:64px;height:30px;overflow:hidden"><div class="t" style="left:2.0px;top:7.0px;height:18px;line-height:18px;font-size:13.5px;color:#000;font-weight:bold;letter-spacing:-0.326px;">AaBbCcD</div></div>
<div class="t" style="left:1347.0px;top:94.5px;height:15px;line-height:15px;font-size:11.5px;color:#15428b;letter-spacing:-0.074px;">Fett</div>
<div class="abs" style="left:1397px;top:63px;width:64px;height:48px;background:#fff;"></div>
<div class="abs" style="left:1397px;top:63px;width:64px;height:30px;overflow:hidden"><div class="t" style="left:3.0px;top:6.0px;height:20px;line-height:20px;font-size:15.5px;color:#000;font-style:italic;letter-spacing:0.188px;">AaBbCc</div></div>
<div class="t" style="left:1399.0px;top:94.5px;height:15px;line-height:15px;font-size:11.5px;color:#15428b;letter-spacing:0.254px;">Anführun...</div>
<div class="abs" style="left:1469px;top:63px;width:64px;height:48px;background:#fff;"></div>
<div class="abs" style="left:1469px;top:63px;width:64px;height:30px;overflow:hidden"><div class="t" style="left:3.0px;top:6.0px;height:20px;line-height:20px;font-size:15.5px;color:#4f81bd;font-weight:bold;font-style:italic;letter-spacing:-0.380px;text-decoration:underline;">AaBbCc</div></div>
<div class="t" style="left:1471.4px;top:94.5px;height:15px;line-height:15px;font-size:11.5px;color:#15428b;letter-spacing:-0.155px;">Intensives...</div>
<div class="abs" style="left:1541px;top:63px;width:64px;height:48px;background:#fff;"></div>
<div class="abs" style="left:1541px;top:63px;width:64px;height:30px;overflow:hidden"><div class="t" style="left:2.5px;top:6px;height:20px;line-height:20px;color:#c0504d;text-decoration:underline;font-size:10.2px;letter-spacing:-0.1px"><span style="font-size:14.2px">A</span>A<span style="font-size:14.2px">B</span>B<span style="font-size:14.2px">C</span>C<span style="font-size:14.2px">D</span></div></div>
<div class="t" style="left:1543.4px;top:94.5px;height:15px;line-height:15px;font-size:11.5px;color:#15428b;letter-spacing:-0.301px;">Schwache...</div>
<div class="abs" style="left:1613px;top:63px;width:64px;height:48px;background:#fff;"></div>
<div class="abs" style="left:1613px;top:63px;width:64px;height:30px;overflow:hidden"><div class="t" style="left:2.5px;top:6px;height:20px;line-height:20px;color:#c0504d;text-decoration:underline;font-weight:bold;font-size:10.2px;letter-spacing:-0.35px"><span style="font-size:14.2px">A</span>A<span style="font-size:14.2px">B</span>B<span style="font-size:14.2px">C</span>C<span style="font-size:14.2px">D</span></div></div>
<div class="t" style="left:1614.0px;top:94.5px;height:15px;line-height:15px;font-size:11.5px;color:#15428b;letter-spacing:-0.091px;">Intensiver ...</div>
<div class="abs" style="left:1682px;top:57px;width:16px;height:60px;border:1px solid #b0c6e4;background:linear-gradient(90deg,#e6eef9,#d3e0f2);border-radius:0 2px 2px 0"></div>
<div class="abs" style="left:1683px;top:76.5px;width:14px;height:1px;background:#b0c6e4;"></div>
<div class="abs" style="left:1683px;top:96.5px;width:14px;height:1px;background:#b0c6e4;"></div>
<svg class="abs" style="left:1686px;top:64px" width="8" height="6" viewBox="0 0 8 6"><path d="M0.5 4.5L4 1L7.5 4.5Z" fill="#b3bccb"/></svg>
<svg class="abs" style="left:1686px;top:84px" width="8" height="6" viewBox="0 0 8 6"><path d="M0.5 1L4 4.5L7.5 1Z" fill="#5b7ba8"/></svg>
<svg class="abs" style="left:1686px;top:102px" width="8" height="9" viewBox="0 0 8 9"><rect x="0.5" y="0.5" width="7" height="1.2" fill="#5b7ba8"/><path d="M0.5 3.5L4 7L7.5 3.5Z" fill="#5b7ba8"/></svg>
<svg class="abs" style="left:1724px;top:56px" width="36" height="32" viewBox="0 0 36 32"><defs><linearGradient id="aa1" x1="0" y1="0" x2="0" y2="1"><stop offset="0" stop-color="#b044b8"/><stop offset="1" stop-color="#e6a5e0"/></linearGradient><linearGradient id="aa2" x1="0" y1="0" x2="0" y2="1"><stop offset="0" stop-color="#2f66c4"/><stop offset="1" stop-color="#8db8ee"/></linearGradient></defs><text x="2" y="22" font-family="Liberation Sans,sans-serif" font-size="25" fill="url(#aa1)" stroke="#a040a8" stroke-width="0.5">A</text><text x="9" y="30" font-family="Liberation Serif,serif" font-size="33" fill="url(#aa2)" stroke="#2a5cb8" stroke-width="0.6">A</text></svg>
<div class="t" style="left:1702.0px;top:91.5px;height:15px;line-height:15px;font-size:11.5px;color:#15428b;letter-spacing:0.014px;">Formatvorlagen</div>
<div class="t" style="left:1720.0px;top:104.5px;height:15px;line-height:15px;font-size:11.5px;color:#15428b;letter-spacing:0.203px;">ändern</div>
<div class="abs" style="left:1759.5px;top:111px;width:0;height:0;border-left:3px solid transparent;border-right:3px solid transparent;border-top:3px solid #5b7ba8"></div>
<svg class="abs" style="left:1799px;top:57px" width="18" height="16" viewBox="0 0 18 16"><g fill="#3b5f9c" stroke="#1f3868" stroke-width="0.7"><rect x="1.5" y="6" width="6" height="8.5" rx="1"/><rect x="9.5" y="6" width="6" height="8.5" rx="1"/><rect x="3" y="1.5" width="3.5" height="5"/><rect x="10.5" y="1.5" width="3.5" height="5"/><rect x="7" y="7" width="3" height="3"/></g><rect x="2.8" y="9" width="3.4" height="4.5" fill="#dce8fa"/><rect x="10.8" y="9" width="3.4" height="4.5" fill="#dce8fa"/></svg>
<div class="t" style="left:1819.0px;top:57.5px;height:15px;line-height:15px;font-size:11.5px;color:#15428b;letter-spacing:-0.214px;">Suchen</div>
<div class="abs" style="left:1861px;top:64px;width:0;height:0;border-left:3px solid transparent;border-right:3px solid transparent;border-top:3px solid #5b7ba8"></div>
<div class="t" style="left:1800.0px;top:78.5px;height:11px;line-height:11px;font-size:9.5px;color:#555;">ab</div>
<div class="t" style="left:1806.0px;top:85.5px;height:11px;line-height:11px;font-size:9.5px;color:#2a8a3c;font-weight:bold;">ac</div>
<svg class="abs" style="left:1800px;top:86px" width="7" height="8" viewBox="0 0 7 8"><path d="M1 0V4.5H5.5M3.5 2.5L5.8 4.5L3.5 6.5" fill="none" stroke="#3b62a8" stroke-width="1"/></svg>
<div class="t" style="left:1819.0px;top:79.5px;height:15px;line-height:15px;font-size:11.5px;color:#15428b;letter-spacing:-0.357px;">Ersetzen</div>
<svg class="abs" style="left:1802px;top:101px" width="12" height="16" viewBox="0 0 12 16"><path d="M1.5 1L1.5 12.5L4.5 9.8L6.8 14.8L8.6 14L6.3 9.2L10.2 9Z" fill="#fff" stroke="#333" stroke-width="0.9" stroke-linejoin="round"/></svg>
<div class="t" style="left:1819.0px;top:101.5px;height:15px;line-height:15px;font-size:11.5px;color:#15428b;letter-spacing:0.066px;">Markieren</div>
<div class="abs" style="left:1874px;top:108px;width:0;height:0;border-left:3px solid transparent;border-right:3px solid transparent;border-top:3px solid #5b7ba8"></div>
<div class="abs" style="left:0px;top:142px;width:1920px;height:859px;background:#9dbbe4;"></div>
<div class="abs" style="left:24px;top:166px;width:1879px;height:835px;background:#fff;"></div>
<div class="abs" style="left:24px;top:147px;width:1879px;height:1px;background:#c4d8f2;"></div>
<div class="abs" style="left:24px;top:148px;width:1879px;height:12px;background:#b2cbec;"></div>
<div class="abs" style="left:47px;top:148px;width:1674px;height:12px;background:#fff;"></div>
<div class="abs" style="left:24px;top:160px;width:1879px;height:1px;background:#c4d8f2;opacity:.6"></div>
<div class="t" style="left:143.0px;top:148.0px;height:12px;line-height:12px;font-size:10.2px;color:#45465a;letter-spacing:-0.397px;">1</div>
<div class="t" style="left:241.5px;top:148.0px;height:12px;line-height:12px;font-size:10.2px;color:#45465a;letter-spacing:-0.397px;">2</div>
<div class="t" style="left:339.9px;top:148.0px;height:12px;line-height:12px;font-size:10.2px;color:#45465a;letter-spacing:-0.397px;">3</div>
<div class="t" style="left:438.4px;top:148.0px;height:12px;line-height:12px;font-size:10.2px;color:#45465a;letter-spacing:-0.397px;">4</div>
<div class="t" style="left:536.8px;top:148.0px;height:12px;line-height:12px;font-size:10.2px;color:#45465a;letter-spacing:-0.397px;">5</div>
<div class="t" style="left:635.3px;top:148.0px;height:12px;line-height:12px;font-size:10.2px;color:#45465a;letter-spacing:-0.397px;">6</div>
<div class="t" style="left:733.7px;top:148.0px;height:12px;line-height:12px;font-size:10.2px;color:#45465a;letter-spacing:-0.397px;">7</div>
<div class="t" style="left:832.2px;top:148.0px;height:12px;line-height:12px;font-size:10.2px;color:#45465a;letter-spacing:-0.397px;">8</div>
<div class="t" style="left:930.6px;top:148.0px;height:12px;line-height:12px;font-size:10.2px;color:#45465a;letter-spacing:-0.397px;">9</div>
<div class="t" style="left:1026.4px;top:148.0px;height:12px;line-height:12px;font-size:10.2px;color:#45465a;letter-spacing:-0.397px;">10</div>
<div class="t" style="left:1125.2px;top:148.0px;height:12px;line-height:12px;font-size:10.2px;color:#45465a;letter-spacing:-0.371px;">11</div>
<div class="t" style="left:1223.3px;top:148.0px;height:12px;line-height:12px;font-size:10.2px;color:#45465a;letter-spacing:-0.397px;">12</div>
<div class="t" style="left:1321.8px;top:148.0px;height:12px;line-height:12px;font-size:10.2px;color:#45465a;letter-spacing:-0.397px;">13</div>
<div class="t" style="left:1420.2px;top:148.0px;height:12px;line-height:12px;font-size:10.2px;color:#45465a;letter-spacing:-0.397px;">14</div>
<div class="t" style="left:1518.7px;top:148.0px;height:12px;line-height:12px;font-size:10.2px;color:#45465a;letter-spacing:-0.397px;">15</div>
<div class="t" style="left:1617.1px;top:148.0px;height:12px;line-height:12px;font-size:10.2px;color:#45465a;letter-spacing:-0.397px;">16</div>
<div class="t" style="left:1814.0px;top:148.0px;height:12px;line-height:12px;font-size:10.2px;color:#45465a;letter-spacing:-0.397px;">18</div>
<svg class="abs" style="left:0px;top:0px" width="1920" height="170" viewBox="0 0 1920 170"><rect x="72" y="152.5" width="1" height="2" fill="#4a4e60"/><rect x="96" y="151" width="1" height="5.5" fill="#4a4e60"/><rect x="121" y="152.5" width="1" height="2" fill="#4a4e60"/><rect x="170" y="152.5" width="1" height="2" fill="#4a4e60"/><rect x="195" y="151" width="1" height="5.5" fill="#4a4e60"/><rect x="219" y="152.5" width="1" height="2" fill="#4a4e60"/><rect x="268" y="152.5" width="1" height="2" fill="#4a4e60"/><rect x="293" y="151" width="1" height="5.5" fill="#4a4e60"/><rect x="318" y="152.5" width="1" height="2" fill="#4a4e60"/><rect x="367" y="152.5" width="1" height="2" fill="#4a4e60"/><rect x="391" y="151" width="1" height="5.5" fill="#4a4e60"/><rect x="416" y="152.5" width="1" height="2" fill="#4a4e60"/><rect x="465" y="152.5" width="1" height="2" fill="#4a4e60"/><rect x="490" y="151" width="1" height="5.5" fill="#4a4e60"/><rect x="515" y="152.5" width="1" height="2" fill="#4a4e60"/><rect x="564" y="152.5" width="1" height="2" fill="#4a4e60"/><rect x="588" y="151" width="1" height="5.5" fill="#4a4e60"/><rect x="613" y="152.5" width="1" height="2" fill="#4a4e60"/><rect x="662" y="152.5" width="1" height="2" fill="#4a4e60"/><rect x="687" y="151" width="1" height="5.5" fill="#4a4e60"/><rect x="711" y="152.5" width="1" height="2" fill="#4a4e60"/><rect x="761" y="152.5" width="1" height="2" fill="#4a4e60"/><rect x="785" y="151" width="1" height="5.5" fill="#4a4e60"/><rect x="810" y="152.5" width="1" height="2" fill="#4a4e60"/><rect x="859" y="152.5" width="1" height="2" fill="#4a4e60"/><rect x="884" y="151" width="1" height="5.5" fill="#4a4e60"/><rect x="908" y="152.5" width="1" height="2" fill="#4a4e60"/><rect x="958" y="152.5" width="1" height="2" fill="#4a4e60"/><rect x="982" y="151" width="1" height="5.5" fill="#4a4e60"/><rect x="1007" y="152.5" width="1" height="2" fill="#4a4e60"/><rect x="1056" y="152.5" width="1" height="2" fill="#4a4e60"/><rect x="1081" y="151" width="1" height="5.5" fill="#4a4e60"/><rect x="1105" y="152.5" width="1" height="2" fill="#4a4e60"/><rect x="1154" y="152.5" width="1" height="2" fill="#4a4e60"/><rect x="1179" y="151" width="1" height="5.5" fill="#4a4e60"/><rect x="1204" y="152.5" width="1" height="2" fill="#4a4e60"/><rect x="1253" y="152.5" width="1" height="2" fill="#4a4e60"/><rect x="1278" y="151" width="1" height="5.5" fill="#4a4e60"/><rect x="1302" y="152.5" width="1" height="2" fill="#4a4e60"/><rect x="1351" y="152.5" width="1" height="2" fill="#4a4e60"/><rect x="1376" y="151" width="1" height="5.5" fill="#4a4e60"/><rect x="1401" y="152.5" width="1" height="2" fill="#4a4e60"/><rect x="1450" y="152.5" width="1" height="2" fill="#4a4e60"/><rect x="1474" y="151" width="1" height="5.5" fill="#4a4e60"/><rect x="1499" y="152.5" width="1" height="2" fill="#4a4e60"/><rect x="1548" y="152.5" width="1" height="2" fill="#4a4e60"/><rect x="1573" y="151" width="1" height="5.5" fill="#4a4e60"/><rect x="1597" y="152.5" width="1" height="2" fill="#4a4e60"/><rect x="1647" y="152.5" width="1" height="2" fill="#4a4e60"/><rect x="1671" y="151" width="1" height="5.5" fill="#4a4e60"/><rect x="1696" y="152.5" width="1" height="2" fill="#4a4e60"/><rect x="1745" y="152.5" width="1" height="2" fill="#4a4e60"/><rect x="1770" y="151" width="1" height="5.5" fill="#4a4e60"/><rect x="1794" y="152.5" width="1" height="2" fill="#4a4e60"/><rect x="1844" y="152.5" width="1" height="2" fill="#4a4e60"/><rect x="1868" y="151" width="1" height="5.5" fill="#4a4e60"/><rect x="1893" y="152.5" width="1" height="2" fill="#4a4e60"/><rect x="169" y="161.5" width="1" height="2.5" fill="#72757f"/><rect x="292" y="161.5" width="1" height="2.5" fill="#72757f"/><rect x="415" y="161.5" width="1" height="2.5" fill="#72757f"/><rect x="538" y="161.5" width="1" height="2.5" fill="#72757f"/><rect x="661" y="161.5" width="1" height="2.5" fill="#72757f"/><rect x="784" y="161.5" width="1" height="2.5" fill="#72757f"/><rect x="907" y="161.5" width="1" height="2.5" fill="#72757f"/><rect x="1030" y="161.5" width="1" height="2.5" fill="#72757f"/><rect x="1153" y="161.5" width="1" height="2.5" fill="#72757f"/><rect x="1276" y="161.5" width="1" height="2.5" fill="#72757f"/><rect x="1399" y="161.5" width="1" height="2.5" fill="#72757f"/><rect x="1522" y="161.5" width="1" height="2.5" fill="#72757f"/><rect x="1645" y="161.5" width="1" height="2.5" fill="#72757f"/><g fill="#eef3fb" stroke="#4a74b4" stroke-width="1"><path d="M43.5 144.5H51.5V147.5L47.5 152L43.5 147.5Z"/><path d="M43.5 160.5V156.5L47.5 152L51.5 156.5V160.5Z"/><rect x="43.5" y="160.5" width="8" height="4.5"/></g><path d="M45.5 147H49.5L47.5 150Z M45 157.5H50V160H45Z M45 161.5H50V164H45Z" fill="#c2d0e6"/><path d="M1716.5 159.5V155.5L1720.5 151.5L1724.5 155.5V159.5Z" fill="#e8eef8" stroke="#4a74b4" stroke-width="1"/></svg>
<div class="abs" style="left:0;top:142px;width:25px;height:24px;border:1px solid #4b79c9;background:#b5cdee"></div>
<div class="abs" style="left:5px;top:146px;width:15px;height:15px;border:1px solid #4b79c9;background:linear-gradient(#a9c4ea,#ffffff)"></div>
<svg class="abs" style="left:9px;top:150px" width="8" height="9" viewBox="0 0 8 9"><path d="M1.5 0.5V6.5H7" fill="none" stroke="#16294d" stroke-width="2"/></svg>
<div class="abs" style="left:5px;top:166px;width:14px;height:835px;background:#fff;"></div>
<div class="t" style="left:2px;top:199.8px;width:20px;height:12px;line-height:12px;font-size:10.2px;color:#45465a;text-align:center;transform:rotate(-90deg)">1</div>
<div class="t" style="left:2px;top:298.2px;width:20px;height:12px;line-height:12px;font-size:10.2px;color:#45465a;text-align:center;transform:rotate(-90deg)">2</div>
<div class="t" style="left:2px;top:396.7px;width:20px;height:12px;line-height:12px;font-size:10.2px;color:#45465a;text-align:center;transform:rotate(-90deg)">3</div>
<div class="t" style="left:2px;top:495.1px;width:20px;height:12px;line-height:12px;font-size:10.2px;color:#45465a;text-align:center;transform:rotate(-90deg)">4</div>
<div class="t" style="left:2px;top:593.5px;width:20px;height:12px;line-height:12px;font-size:10.2px;color:#45465a;text-align:center;transform:rotate(-90deg)">5</div>
<div class="t" style="left:2px;top:692.0px;width:20px;height:12px;line-height:12px;font-size:10.2px;color:#45465a;text-align:center;transform:rotate(-90deg)">6</div>
<div class="t" style="left:2px;top:790.4px;width:20px;height:12px;line-height:12px;font-size:10.2px;color:#45465a;text-align:center;transform:rotate(-90deg)">7</div>
<div class="t" style="left:2px;top:888.9px;width:20px;height:12px;line-height:12px;font-size:10.2px;color:#45465a;text-align:center;transform:rotate(-90deg)">8</div>
<div class="t" style="left:2px;top:987.4px;width:20px;height:12px;line-height:12px;font-size:10.2px;color:#45465a;text-align:center;transform:rotate(-90deg)">9</div>
<svg class="abs" style="left:0px;top:0px" width="24" height="1001" viewBox="0 0 24 1001"><rect x="11" y="180" width="2" height="1" fill="#4a4e60"/><rect x="11" y="229" width="2" height="1" fill="#4a4e60"/><rect x="9.5" y="254" width="5" height="1" fill="#4a4e60"/><rect x="11" y="279" width="2" height="1" fill="#4a4e60"/><rect x="11" y="328" width="2" height="1" fill="#4a4e60"/><rect x="9.5" y="352" width="5" height="1" fill="#4a4e60"/><rect x="11" y="377" width="2" height="1" fill="#4a4e60"/><rect x="11" y="426" width="2" height="1" fill="#4a4e60"/><rect x="9.5" y="451" width="5" height="1" fill="#4a4e60"/><rect x="11" y="475" width="2" height="1" fill="#4a4e60"/><rect x="11" y="525" width="2" height="1" fill="#4a4e60"/><rect x="9.5" y="549" width="5" height="1" fill="#4a4e60"/><rect x="11" y="574" width="2" height="1" fill="#4a4e60"/><rect x="11" y="623" width="2" height="1" fill="#4a4e60"/><rect x="9.5" y="648" width="5" height="1" fill="#4a4e60"/><rect x="11" y="672" width="2" height="1" fill="#4a4e60"/><rect x="11" y="722" width="2" height="1" fill="#4a4e60"/><rect x="9.5" y="746" width="5" height="1" fill="#4a4e60"/><rect x="11" y="771" width="2" height="1" fill="#4a4e60"/><rect x="11" y="820" width="2" height="1" fill="#4a4e60"/><rect x="9.5" y="845" width="5" height="1" fill="#4a4e60"/><rect x="11" y="869" width="2" height="1" fill="#4a4e60"/><rect x="11" y="919" width="2" height="1" fill="#4a4e60"/><rect x="9.5" y="943" width="5" height="1" fill="#4a4e60"/><rect x="11" y="968" width="2" height="1" fill="#4a4e60"/></svg>
<div class="abs" style="left:1903px;top:142px;width:17px;height:859px;background:linear-gradient(90deg,#a8c5f0 0,#8cabd8 1.5px,#7d9dcb 7px,#7a9aca 11px,#85a4d2 15.5px,#a8c5f0 17px);"></div>
<div class="abs" style="left:1903px;top:142px;width:17px;height:6px;background:#a3c1ee;"></div>
<div class="abs" style="left:1907px;top:144px;width:9px;height:2px;background:#333a55;"></div>
<div class="abs" style="left:1903px;top:148px;width:17px;height:17px;border:1px solid #929ab2;background:#c9ced9"></div>
<svg class="abs" style="left:1904px;top:150px" width="15" height="13" viewBox="0 0 15 13"><path d="M1.5 3.5H3V1.5H6.5V3.5H12.5V10H10.5V12H7V10H1.5Z" fill="#f6eaf1" stroke="#1f3350" stroke-width="1"/><path d="M3.5 2.5L4.7 4.5L6 2.5Z M7.5 11L8.7 9L10 11Z" fill="#fff" stroke="#1f3350" stroke-width="0.6"/><path d="M7 6V7.5M11 6V7.5" stroke="#55607a" stroke-width="0.9"/></svg>
<svg class="abs" style="left:1906px;top:170px" width="10" height="7" viewBox="0 0 10 7"><path d="M0.5 6L5 1L9.5 6Z" fill="#4a5a80"/></svg>
<svg class="abs" style="left:1906px;top:938px" width="10" height="7" viewBox="0 0 10 7"><path d="M0.5 1L5 6L9.5 1Z" fill="#4a5a80"/></svg>
<div class="abs" style="left:1904.5px;top:245px;width:14px;height:205px;border:1px solid #6f8fc0;border-radius:2px;background:linear-gradient(90deg,#f4f7fc 0,#dde6f3 45%,#c3d1e6 55%,#d6e0f0 100%)"></div>
<svg class="abs" style="left:1907px;top:343px" width="9" height="9" viewBox="0 0 9 9"><g stroke="#6b7fa6" stroke-width="1"><path d="M0 0.5H8M0 2.5H8M0 4.5H8M0 6.5H8"/></g></svg>
<div class="abs" style="left:1903px;top:950px;width:17px;height:51px;background:#a8c4ec;"></div>
<svg class="abs" style="left:1907px;top:955px" width="8" height="8" viewBox="0 0 8 8"><path d="M4 0.5L7 3.5H1ZM4 3.8L7 6.8H1Z" fill="#151c30"/></svg>
<svg class="abs" style="left:1906px;top:970px" width="10" height="10" viewBox="0 0 10 10"><circle cx="4.6" cy="4.8" r="3.1" fill="#c4c4c4" stroke="#1c2238" stroke-width="1"/><circle cx="3.8" cy="4" r="1.2" fill="#f2f2f2"/></svg>
<svg class="abs" style="left:1907px;top:988px" width="8" height="8" viewBox="0 0 8 8"><path d="M1 0.5H7L4 3.5ZM1 3.8H7L4 6.8Z" fill="#151c30"/></svg>
<div class="abs" style="left:0px;top:1001px;width:1903px;height:18px;background:linear-gradient(#a9c5ea 0,#86a6d4 1.5px,#7a9bca 3px,#7b9ccb 14px,#86a5d2 16px,#5e84c0 17px,#bcd4f3 18px);"></div>
<div class="abs" style="left:1903px;top:1001px;width:17px;height:18px;background:#a8c4ec;"></div>
<svg class="abs" style="left:6px;top:1005px" width="8" height="11" viewBox="0 0 8 11"><path d="M7 0.5L1 5.5L7 10.5Z" fill="#3f4f78"/></svg>
<svg class="abs" style="left:1891px;top:1005px" width="8" height="11" viewBox="0 0 8 11"><path d="M1 0.5L7 5.5L1 10.5Z" fill="#3f4f78"/></svg>
<div class="abs" style="left:211px;top:1003px;width:1616px;height:14px;border:1px solid #6f8fc0;border-radius:2px;background:linear-gradient(#f4f7fc 0,#dde6f3 45%,#c3d1e6 55%,#d6e0f0 100%)"></div>
<svg class="abs" style="left:1014px;top:1006px" width="9" height="9" viewBox="0 0 9 9"><g stroke="#6b7fa6" stroke-width="1"><path d="M0.5 0V8M2.5 0V8M4.5 0V8M6.5 0V8"/></g></svg>
<!-- diagram -->
<svg class="abs" style="left:0;top:0" width="1920" height="1080" viewBox="0 0 1920 1080">
<defs>
<pattern id="hatch" x="723" y="0" width="4" height="10" patternUnits="userSpaceOnUse"><rect x="0" y="0" width="1.8" height="10" fill="#000"/></pattern>
</defs>
<g fill="#000" stroke="#000" stroke-width="17" stroke-linejoin="miter">
<defs><path id="gS" d="M1272 389Q1272 194 1119.5 87.0Q967 -20 690 -20Q150 -20 93 478L276 478Q300 262 414.0 188.5Q518 129 697 129Q882 129 982.5 192.5Q1083 256 1083 379Q1083 448 1051.5 491.0Q1020 534 963.0 562.0Q906 590 827.0 609.0Q748 628 652 650Q485 687 398.5 724.0Q312 761 262.0 806.5Q212 852 185.5 913.0Q159 974 159 1053Q159 1234 297.5 1332.0Q436 1430 694 1430Q934 1430 1061.0 1356.5Q1215 1270 1237 1013L1053 1013Q1036 1175 933.0 1235.5Q846 1286 692 1286Q523 1286 434.0 1230.0Q345 1174 345 1063Q345 998 379.5 955.5Q414 913 479.0 883.5Q544 854 738 811Q803 796 867.5 780.5Q932 765 991.0 743.5Q1050 722 1101.5 693.0Q1153 664 1191.0 622.0Q1229 580 1250.5 523.0Q1272 466 1272 389Z"/><path id="gO" d="M1495 711Q1495 490 1410.5 324.0Q1326 158 1168.0 69.0Q1010 -20 795 -20Q578 -20 420.5 68.0Q263 156 180.0 322.5Q97 489 97 711Q97 1049 282.0 1239.5Q467 1430 797 1430Q1012 1430 1170.0 1344.5Q1328 1259 1411.5 1096.0Q1495 933 1495 711ZM1300 711Q1300 974 1168.5 1124.0Q1037 1274 797 1274Q555 1274 423.0 1126.0Q291 978 291 711Q291 446 424.5 290.5Q558 135 795 135Q1039 135 1169.5 285.5Q1300 436 1300 711Z"/></defs>
<use href="#gS" stroke-width="17.2" transform="matrix(0.07863 0 0 -0.08438 604.29 546.36)"/>
<use href="#gO" stroke-width="7.2" transform="matrix(0.08119 0 0 -0.08531 848.32 588.99)"/>
<use href="#gO" stroke-width="7.2" transform="matrix(0.08165 0 0 -0.08528 328.13 732.24)"/>
<use href="#gO" stroke-width="7.2" transform="matrix(0.08155 0 0 -0.08545 713.09 821.79)"/>
</g>
<!-- plus circle -->
<ellipse cx="650.7" cy="340" rx="34.5" ry="34.7" fill="none" stroke="#000" stroke-width="2.85"/>
<rect x="649" y="315.5" width="5.2" height="49.5" fill="#000"/>
<rect x="626" y="337.3" width="49.3" height="5.6" fill="#000"/>
<!-- bar above S -->
<rect x="602" y="390.6" width="109" height="8" fill="#000"/>
<!-- hashed wedge -->
<polygon points="723.5,509.6 841.4,509.6 849.2,563.2" fill="url(#hatch)"/>
<!-- right O bars -->
<rect x="849.8" y="437.8" width="110.2" height="8" fill="#000"/>
<rect x="855.3" y="606.9" width="110.4" height="8" fill="#000"/>
<rect x="992.3" y="469.5" width="7.8" height="121.6" fill="#000"/>
<ellipse cx="1062.2" cy="522.8" rx="34.5" ry="34.5" fill="none" stroke="#000" stroke-width="2.85"/>
<rect x="1038" y="521.5" width="49" height="5.5" fill="#000"/>
<!-- S-O bond left -->
<g stroke="#000" fill="none" stroke-linecap="butt">
<line x1="458.75" y1="610.5" x2="582.5" y2="536.75" stroke-width="9.5"/>
<line x1="303.9" y1="626.9" x2="386.25" y2="579.9" stroke-width="8"/>
<line x1="396.4" y1="771.4" x2="479.4" y2="724.4" stroke-width="8"/>
<line x1="296.25" y1="682" x2="344.6" y2="754.5" stroke-width="8"/>
<!-- bottom O bars -->
<line x1="837.4" y1="673.9" x2="876" y2="761.3" stroke-width="8"/>
<line x1="685.8" y1="761.3" x2="724.8" y2="848" stroke-width="8"/>
<line x1="782.1" y1="861.7" x2="864.8" y2="821.5" stroke-width="8"/>
</g>
<ellipse cx="260.1" cy="741.85" rx="34.55" ry="34.5" fill="none" stroke="#000" stroke-width="2.85"/>
<rect x="235.9" y="740.7" width="49.3" height="5.3" fill="#000"/>
<!-- solid wedge -->
<polygon points="691,562.6 768.7,667.8 725.4,695" fill="#000" stroke="#000" stroke-width="1.3" stroke-linejoin="round"/>
<ellipse cx="849.7" cy="896.45" rx="34.5" ry="34.4" fill="none" stroke="#000" stroke-width="2.85"/>
<rect x="825" y="895.25" width="49.8" height="5.4" fill="#000"/>
</svg>
<div class="abs" style="left:0px;top:1019px;width:1920px;height:21px;background:linear-gradient(#e6f0fd 0,#d6e6fa 2px,#cfe1f9 8px,#bed5f5 9px,#c1d7f6 15px,#cde0fa 21px);"></div>
<div class="t" style="left:8.0px;top:1022.0px;height:15px;line-height:15px;font-size:11.5px;color:#15428b;letter-spacing:-0.233px;">Seite: 1 von 1</div>
<div class="t" style="left:94.0px;top:1022.0px;height:15px;line-height:15px;font-size:11.5px;color:#15428b;letter-spacing:0.083px;">Wörter: 4</div>
<div class="abs" style="left:84px;top:1020px;width:1px;height:20px;background:#9db8df;"></div>
<div class="abs" style="left:85px;top:1020px;width:1px;height:20px;background:#e9f2fd;"></div>
<div class="abs" style="left:151px;top:1020px;width:1px;height:20px;background:#9db8df;"></div>
<div class="abs" style="left:152px;top:1020px;width:1px;height:20px;background:#e9f2fd;"></div>
<div class="abs" style="left:184px;top:1020px;width:1px;height:20px;background:#9db8df;"></div>
<div class="abs" style="left:185px;top:1020px;width:1px;height:20px;background:#e9f2fd;"></div>
<svg class="abs" style="left:158px;top:1021px" width="20" height="18" viewBox="0 0 20 18"><path d="M2 10L9 6.5L16 10L9 14Z" fill="#f6f8fc" stroke="#4d6fb8" stroke-width="1"/><path d="M2 10V12L9 16L16 12V10L9 14Z" fill="#3f66b8"/><path d="M8 6L11 9L17.5 1.5" fill="none" stroke="#3059b8" stroke-width="1.8"/></svg>
<div class="abs" style="left:1636px;top:1020px;width:1px;height:20px;background:#e9f2fd;"></div>
<div class="abs" style="left:1635px;top:1020px;width:1px;height:20px;background:#a9c2e6;"></div>
<div class="abs" style="left:1642px;top:1020.5px;width:91px;height:18px;border:1px solid #9ab6de;border-radius:2px;background:linear-gradient(#e4eefb,#c6d9f3 50%,#bdd3f1 51%,#d2e2f7)"></div>
<div class="abs" style="left:1643px;top:1021.5px;width:17px;height:16px;background:linear-gradient(#fde3a8,#fbc15c 50%,#f9ad3a 51%,#fdd98c);border-right:1px solid #d9a257"></div>
<div class="abs" style="left:1678px;top:1021.5px;width:1px;height:16px;background:#a9c1e4;"></div>
<div class="abs" style="left:1696px;top:1021.5px;width:1px;height:16px;background:#a9c1e4;"></div>
<div class="abs" style="left:1714px;top:1021.5px;width:1px;height:16px;background:#a9c1e4;"></div>
<svg class="abs" style="left:1645px;top:1023px" width="14" height="13" viewBox="0 0 14 13"><rect x="1.5" y="0.5" width="10" height="12" fill="#fff" stroke="#55607a" stroke-width="1"/><path d="M3.5 3.5H9.5M3.5 5.5H9.5M3.5 7.5H9.5M3.5 9.5H9.5" stroke="#55607a" stroke-width="1"/></svg>
<svg class="abs" style="left:1663px;top:1023px" width="14" height="13" viewBox="0 0 14 13"><path d="M0.5 1.5H5.5L6.5 2.5L7.5 1.5H12.5V10.5H7.5L6.5 11.5L5.5 10.5H0.5Z" fill="#fff" stroke="#55607a" stroke-width="0.9"/><path d="M6.5 2.5V11.5M2 4H5M2 6H5M2 8H5M8 4H11M8 6H11M8 8H11" stroke="#55607a" stroke-width="0.8"/></svg>
<svg class="abs" style="left:1681px;top:1023px" width="14" height="13" viewBox="0 0 14 13"><rect x="0.5" y="0.5" width="9" height="9" fill="#fff" stroke="#55607a" stroke-width="0.9"/><path d="M2 3H8M2 5H8M2 7H6" stroke="#55607a" stroke-width="0.8"/><circle cx="9.5" cy="9.5" r="3.2" fill="#3d8fd8" stroke="#2a5a9a" stroke-width="0.6"/><path d="M8 9.5C9 8 10.5 8.5 11 10" stroke="#5cc06a" stroke-width="1.2" fill="none"/></svg>
<svg class="abs" style="left:1699px;top:1023px" width="14" height="13" viewBox="0 0 14 13"><path d="M1 1.5H4M5 3.5H12M5 5.5H12M7 7.5H12M7 9.5H12M5 11.5H12" stroke="#55607a" stroke-width="1"/></svg>
<svg class="abs" style="left:1717px;top:1023px" width="14" height="13" viewBox="0 0 14 13"><path d="M1 1.5H12M1 3.5H12M1 5.5H12M1 7.5H12M1 9.5H12M1 11.5H12" stroke="#55607a" stroke-width="1"/></svg>
<div class="t" style="left:1742.5px;top:1022.0px;height:15px;line-height:15px;font-size:11.5px;color:#15428b;letter-spacing:-0.616px;">260 %</div>
<div class="abs" style="left:1797px;top:1029px;width:102px;height:1px;background:#7f9ccb;"></div>
<div class="abs" style="left:1797px;top:1030px;width:102px;height:1px;background:#eaf2fd;"></div>
<div class="abs" style="left:1849px;top:1025px;width:1px;height:9px;background:#7f9ccb;"></div>
<svg class="abs" style="left:1780px;top:1020px" width="18" height="18" viewBox="0 0 18 18"><defs><linearGradient id="zg" x1="0" y1="0" x2="0" y2="1"><stop offset="0" stop-color="#ffffff"/><stop offset="0.5" stop-color="#dfe8f6"/><stop offset="1" stop-color="#c3d3ec"/></linearGradient></defs><circle cx="9" cy="9" r="7.6" fill="url(#zg)" stroke="#6a82ad" stroke-width="1"/><rect x="5" y="8" width="8" height="2" fill="#3b4f78"/></svg>
<svg class="abs" style="left:1898px;top:1020px" width="18" height="18" viewBox="0 0 18 18"><defs><linearGradient id="zg" x1="0" y1="0" x2="0" y2="1"><stop offset="0" stop-color="#ffffff"/><stop offset="0.5" stop-color="#dfe8f6"/><stop offset="1" stop-color="#c3d3ec"/></linearGradient></defs><circle cx="9" cy="9" r="7.6" fill="url(#zg)" stroke="#6a82ad" stroke-width="1"/><rect x="5" y="8" width="8" height="2" fill="#3b4f78"/><rect x="8" y="5" width="2" height="8" fill="#3b4f78"/></svg>
<svg class="abs" style="left:1860px;top:1021px" width="11" height="16" viewBox="0 0 11 16"><path d="M1 0.5H10V10L5.5 15L1 10Z" fill="#e9eef7" stroke="#5f78a8" stroke-width="1"/><path d="M5.5 3V9" stroke="#8fa3c8" stroke-width="1.5"/></svg>
<div class="abs" style="left:0px;top:1040px;width:1920px;height:40px;background:linear-gradient(90deg,#343436 0,#3c3c3c 22%,#3e3e3e 70%,#3a3531 84%,#2e2b29 94%,#2a2928 100%);"></div>
<div class="abs" style="left:0px;top:1040px;width:48px;height:40px;background:#1c1c1f;"></div>
<svg class="abs" style="left:16px;top:1052px" width="16" height="16" viewBox="0 0 16 16"><path d="M0 2.3L6.5 1.4V7.5H0ZM7.5 1.25L16 0V7.5H7.5ZM0 8.5H6.5V14.6L0 13.7ZM7.5 8.5H16V16L7.5 14.75Z" fill="#fff"/></svg>
<div class="abs" style="left:48px;top:1040px;width:344px;height:40px;background:#f2f2f2;border-top:1px solid #b9b9b9;border-bottom:1px solid #c4c4c4"></div>
<svg class="abs" style="left:58px;top:1050px" width="20" height="20" viewBox="0 0 20 20"><circle cx="13" cy="7.5" r="5" fill="none" stroke="#222" stroke-width="1.4"/><path d="M9.3 11.2L2.5 18" stroke="#222" stroke-width="1.5"/></svg>
<div class="t" style="left:88.0px;top:1050.0px;height:20px;line-height:20px;font-size:15px;color:#1d1d1d;letter-spacing:-0.169px;">Zur Suche Text hier eingeben</div>
<svg class="abs" style="left:300px;top:1041px" width="92" height="38" viewBox="0 0 92 38"><defs><radialGradient id="wat" cx="0.55" cy="0.6" r="0.7"><stop offset="0" stop-color="#62d0e8"/><stop offset="1" stop-color="#3196e4"/></radialGradient><linearGradient id="cl" x1="0" y1="0" x2="0" y2="1"><stop offset="0" stop-color="#fbe9ec"/><stop offset="1" stop-color="#eeb9c0"/></linearGradient><linearGradient id="twr" x1="0" y1="0" x2="1" y2="0"><stop offset="0" stop-color="#e8c874"/><stop offset="0.6" stop-color="#dcb45a"/><stop offset="1" stop-color="#b98f3c"/></linearGradient></defs><g fill="url(#cl)"><path d="M18 17.5C16 17 16.5 13.5 19 13.5C19.5 11 23.5 10.5 24.5 13C27 12.5 27.5 15 26.5 16C29.5 16 29.5 17.5 28 17.5Z"/><path d="M39 12.5C35.5 12.5 35 8 38 7C38.5 4.5 41.5 4.5 42.5 6C44 2 50 2.5 50.5 6.5C54 6.5 54.5 11 52 12.5Z"/></g><ellipse cx="33" cy="39" rx="20.5" ry="10.5" fill="url(#wat)"/><path d="M38 27C45 20.5 62 19 76 20.5V28H38Z" fill="#5f9a38"/><path d="M40 27C47 23 60 22 72 24V28Z" fill="#3f7428"/><path d="M33.5 33C36 27.5 40 25 49 25V33Z" fill="#b99a3c"/><path d="M35 30.5H48M36.5 28.5H48M38.5 26.8H48" stroke="#8a6f22" stroke-width="0.9"/><path d="M32.5 33C42 33.5 52 34 60 38H49C46 35.5 40 34.5 32.5 33.5Z" fill="#f0c26a"/><rect x="56" y="22" width="7" height="6" fill="#d9b45c"/><rect x="63" y="22" width="8" height="11" fill="#cdb4e4"/><rect x="48" y="26.5" width="4.5" height="10" fill="#e8a878"/><rect x="52" y="27" width="10" height="11" fill="#ee8f9a"/><rect x="60" y="29.5" width="8.5" height="9" fill="#c0546c"/><rect x="54" y="30.5" width="5" height="6.5" fill="#c6b4ea"/><rect x="70" y="24" width="9" height="14" fill="#e2bf68"/><rect x="69" y="33" width="6" height="5" fill="#cfa84e"/><rect x="83" y="18" width="9" height="8" fill="#8a6038"/><rect x="78" y="22.5" width="8" height="6" fill="#a87848"/><rect x="74" y="12.5" width="10" height="13" fill="url(#twr)"/><path d="M74 13C74 6.5 84 6.5 84 13Z" fill="#6d68ac"/><rect x="77.3" y="4" width="3.2" height="4.5" fill="#dcb45a"/><path d="M77.2 4.3C77.5 2.2 80.3 2.2 80.6 4.3Z" fill="#5a5598"/><g fill="#1f2a5a"><path d="M75 16.5L76 14.2L77 16.5Z"/><path d="M78.5 16.5L79.5 14.2L80.5 16.5Z"/><path d="M82 16.5L82.8 14.2L83.6 16.5Z"/></g><path d="M67 33L75 30.5L78 38H70Z" fill="#6aa83a"/><g fill="#d4389a"><ellipse cx="79" cy="32" rx="4.5" ry="6.5" transform="rotate(-25 79 32)"/><ellipse cx="85" cy="28.5" rx="4" ry="6" transform="rotate(10 85 28.5)"/><ellipse cx="89.5" cy="25.5" rx="3.5" ry="5"/><ellipse cx="83" cy="35" rx="5" ry="5.5"/><ellipse cx="90" cy="33" rx="3.5" ry="6"/></g><path d="M80 30C82 33 82 36 81 38M86 27C87 31 87 35 86 38" stroke="#b02880" stroke-width="0.6" fill="none"/></svg>
<svg class="abs" style="left:405px;top:1049px" width="22" height="22" viewBox="0 0 22 22"><g fill="none" stroke="#fff" stroke-width="1.3"><rect x="4.7" y="7.7" width="7.8" height="7.4"/><path d="M3.4 5.4V3.7H14.2V5.4M3.4 15.6V17.3H14.2V15.6"/><path d="M17.6 2.6V18.3" stroke-width="1.4"/></g><rect x="16" y="6.5" width="3.4" height="3.2" fill="#fff"/></svg>
<svg class="abs" style="left:453px;top:1047px" width="28" height="26" viewBox="0 0 28 26"><path d="M3 4.5C3 4 3.3 3.7 3.8 3.7H11.2L13 5.8H3Z" fill="#e8a500"/><rect x="3" y="5.5" width="21.5" height="15.7" rx="0.8" fill="#ffd566"/><rect x="3" y="5.5" width="21.5" height="2" fill="#f7c64a"/><path d="M7 21.8V15.5C7 14.6 7.5 14 8.4 14H19.6C20.5 14 21 14.6 21 15.5V21.8H17.2V17.5H10.8V21.8Z" fill="#3b8fe4"/></svg>
<svg class="abs" style="left:502px;top:1046px" width="28" height="28" viewBox="0 0 28 28"><path d="M7.5 9V5C7.5 3.7 8.2 3.2 9.3 3.2H18.2C19.3 3.2 20 3.7 20 5V9" fill="none" stroke="#2ea8f0" stroke-width="2"/><path d="M2 6.8H25.3V22.5C25.3 24.8 24 26.3 21.8 26.3H5.5C3.3 26.3 2 24.8 2 22.5Z" fill="#f4f4f4"/><path d="M2 20V22.5C2 24.8 3.3 26.3 5.5 26.3H21.8C24 26.3 25.3 24.8 25.3 22.5V20Z" fill="#e2e2e2" opacity=".6"/><rect x="8.8" y="12" width="4.2" height="4.2" fill="#f25022"/><rect x="14.2" y="12" width="4.2" height="4.2" fill="#7fba00"/><rect x="8.8" y="17.4" width="4.2" height="4.2" fill="#00a4ef"/><rect x="14.2" y="17.4" width="4.2" height="4.2" fill="#ffb900"/></svg>
<svg class="abs" style="left:552px;top:1047px" width="26" height="26" viewBox="0 0 26 26"><circle cx="13" cy="13" r="12" fill="#db4437"/><path d="M13 13L2.6 7A12 12 0 0 0 9.5 24.5L13 13Z" fill="#0f9d58"/><path d="M13 13L9.5 24.5A12 12 0 0 0 25 13Z" fill="#0f9d58"/><path d="M13 13H25A12 12 0 0 1 11 24.8Z" fill="#ffcd40"/><path d="M2.6 7A12 12 0 0 1 23.4 7H13Z" fill="#db4437"/><circle cx="13" cy="13" r="5.6" fill="#fff"/><circle cx="13" cy="13" r="4.4" fill="#4285f4"/></svg>
<svg class="abs" style="left:599px;top:1046px" width="30" height="28" viewBox="0 0 30 28"><defs><linearGradient id="oxl" x1="0" y1="0" x2="1" y2="1"><stop offset="0" stop-color="#eaf4e4"/><stop offset="1" stop-color="#8cc473"/></linearGradient></defs><path d="M3 21.5V8Q3 2 9.5 2H23V21.5Z" fill="url(#oxl)" stroke="#6cc04a" stroke-width="1"/><path d="M6.5 8.2L26.2 6.8L25.6 24.2L6 21.2Z" fill="#f3f6ec" stroke="rgba(120,130,140,.35)" stroke-width="0.5"/><g fill="#4f9a3e"><path d="M17.5 9.2L20.5 9L20.4 11.2L17.4 11.4Z"/><path d="M21.5 8.9L24.6 8.7L24.5 10.9L21.4 11.1Z"/><path d="M17.3 12.6L20.3 12.5L20.2 14.8L17.2 14.8Z"/><path d="M21.3 12.4L24.4 12.3L24.3 14.7L21.2 14.7Z"/><path d="M8 16.3L11.2 16.5L11.1 18.9L7.8 18.5Z"/><path d="M12.3 16.6L15.6 16.8L15.5 19.4L12.2 19Z"/><path d="M16.8 16.9L20 17.1L19.9 19.9L16.7 19.5Z"/><path d="M21.2 17.2L24.2 17.4L24.1 20.4L21.1 20Z"/></g><path d="M8.5 9.5L11 9.3L12.6 11.4L14.3 9.1L16.6 9L13.8 12.7L16.8 16L14.2 15.9L12.5 13.8L10.6 15.6L8.2 15.4L11.3 12.6Z" fill="#2e7d2a"/></svg>
<div class="abs" style="left:638px;top:1040px;width:49px;height:40px;background:#5c5c5c;"></div>
<svg class="abs" style="left:648px;top:1046px" width="30" height="28" viewBox="0 0 30 28"><defs><linearGradient id="owd" x1="0" y1="0" x2="1" y2="1"><stop offset="0" stop-color="#c9d8f4"/><stop offset="1" stop-color="#2f5fb8"/></linearGradient></defs><path d="M3 21.5V8Q3 2 9.5 2H23V21.5Z" fill="url(#owd)" stroke="#9db4e8" stroke-width="1"/><path d="M6.5 8.2L26.2 6.8L25.6 24.2L6 21.2Z" fill="#eef3fb" stroke="rgba(120,130,140,.35)" stroke-width="0.5"/><path d="M9 10L10.8 9.9L11.8 13.6L12.9 9.8L14.4 9.7L15.4 13.4L16.4 9.6L18.2 9.5L16.3 15.4L14.6 15.4L13.6 11.8L12.5 15.5L10.8 15.5Z" fill="#2f56b0"/><g stroke="#2a4fb0" stroke-width="1.2"><path d="M19 10.3L24.4 10M19 12.6L24.3 12.4M19 14.9L24.2 14.8M9.5 17.3L24.1 18.2M9.3 19.6L24 20.8"/></g></svg>
<svg class="abs" style="left:697px;top:1046px" width="30" height="28" viewBox="0 0 30 28"><defs><linearGradient id="opp" x1="0" y1="0" x2="1" y2="1"><stop offset="0" stop-color="#fde3d6"/><stop offset="1" stop-color="#f08858"/></linearGradient></defs><path d="M3 21.5V8Q3 2 9.5 2H23V21.5Z" fill="url(#opp)" stroke="#f0a070" stroke-width="1"/><path d="M6.5 8.2L26.2 6.8L25.6 24.2L6 21.2Z" fill="#fdf1ea" stroke="rgba(120,130,140,.35)" stroke-width="0.5"/><path d="M9 10.2L24.2 9.2L23.8 20.6L8.6 18.8Z" fill="#e8501c"/><path d="M9 10.2L24.2 9.2L24 14L8.8 14.6Z" fill="#f47a3c" opacity=".7"/><circle cx="19.5" cy="14.8" r="3.1" fill="#fdeee6"/><path d="M19.5 14.8V11.7A3.1 3.1 0 0 1 22.6 14.8Z" fill="#e8501c"/><path d="M10.5 12.8L15.5 12.5M10.5 14.8L15.5 14.7M10.4 16.8L15.4 17" stroke="#fdeee6" stroke-width="1.3"/></svg>
<div class="abs" style="left:545.5px;top:1078px;width:39.5px;height:2px;background:#79b8ea;"></div>
<div class="abs" style="left:594px;top:1078px;width:40px;height:2px;background:#79b8ea;"></div>
<div class="abs" style="left:639px;top:1078px;width:48px;height:2px;background:#79b8ea;"></div>
<svg class="abs" style="left:1579px;top:1047px" width="28" height="25" viewBox="0 0 28 25"><path d="M14 1.5C15 1.5 15.6 2 16.2 3L26.3 20.5C27 22 26.2 23.5 24.5 23.5H3.5C1.8 23.5 1 22 1.7 20.5L11.8 3C12.4 2 13 1.5 14 1.5Z" fill="#f2c318"/><g fill="none" stroke="#4a3c08" stroke-width="1.1" stroke-linecap="round"><path d="M7 15H16C18.5 15 18.5 11 16 11C14.8 11 14 11.8 14 12.8"/><path d="M6 17.5H19.5C22 17.5 22 21 19.5 21C18.5 21 17.8 20.3 17.8 19.6"/><path d="M8.5 20H14"/></g></svg>
<div class="t" style="left:1613.4px;top:1050.5px;height:20px;line-height:20px;font-size:15px;color:#fff;letter-spacing:-0.543px;">Wind</div>
<svg class="abs" style="left:1662px;top:1055px" width="14" height="9" viewBox="0 0 14 9"><path d="M1 8L7 1.8L13 8" fill="none" stroke="#fff" stroke-width="1.3"/></svg>
<svg class="abs" style="left:1686px;top:1051px" width="16" height="19" viewBox="0 0 16 19"><g fill="none" stroke="#fff" stroke-width="1.1"><rect x="1.5" y="5.5" width="8" height="7.5" rx="1.5"/><path d="M9.5 8L13.5 6V12.5L9.5 10.5"/><path d="M3 2.5C5 1 8 1 10.5 2.5M3 16C5 17.5 8 17.5 10.5 16"/></g></svg>
<svg class="abs" style="left:1708px;top:1051px" width="20" height="19" viewBox="0 0 20 19"><g fill="none" stroke="#fff" stroke-width="1.1"><path d="M1.5 3.5L14.5 1.5V13.5L1.5 15.5Z"/><path d="M5 8L8 6.5M8 6.5V9M11 6C9 7 8 8.5 8 10.5"/></g><circle cx="13.5" cy="13.5" r="3" fill="#2e7fd8"/></svg>
<svg class="abs" style="left:1732px;top:1051px" width="19" height="19" viewBox="0 0 19 19"><g fill="none" stroke="#fff" stroke-width="1.1"><rect x="4.5" y="2.5" width="12" height="9"/><path d="M10.5 11.5V15.5M6 15.5H15"/><rect x="1.5" y="3.5" width="4" height="3" fill="#2e2e2e"/><path d="M3.5 6.5V15.5H6"/></g></svg>
<svg class="abs" style="left:1756px;top:1051px" width="20" height="19" viewBox="0 0 20 19"><g fill="none" stroke="#fff" stroke-width="1.1"><path d="M1.5 7H4.5L8.5 3.5V15.5L4.5 12H1.5Z"/><path d="M10.5 7C11.8 8.5 11.8 10.5 10.5 12" /><path d="M12.8 5C15 7.5 15 11.5 12.8 14" opacity=".75"/><path d="M15 3C18.2 6.5 18.2 12.5 15 16" opacity=".45"/></g></svg>
<svg class="abs" style="left:1780px;top:1051px" width="19" height="19" viewBox="0 0 19 19"><g fill="#fff"><path d="M4 3.5L6.5 1.5L9 3.5L6.5 5.5Z"/><path d="M11 3.5L13.5 1.5L16 3.5L13.5 5.5Z"/><path d="M11 9L13.5 7L16 9L13.5 11Z"/><path d="M8.5 12.5L11 10.8L13 12.5L11 14.2Z"/></g><rect x="1.5" y="7.5" width="8" height="9" rx="1" fill="#d8162c"/><text x="5.5" y="15" font-size="7.5" font-weight="bold" font-family="Liberation Sans,sans-serif" fill="#fff" text-anchor="middle">2</text></svg>
<div class="t" style="left:1821.2px;top:1044.0px;height:14px;line-height:14px;font-size:12px;color:#fff;letter-spacing:-0.843px;">19:26</div>
<div class="t" style="left:1807.0px;top:1062.0px;height:14px;line-height:14px;font-size:12px;color:#fff;letter-spacing:-0.663px;">01.02.2023</div>
<svg class="abs" style="left:1877px;top:1050px" width="26" height="26" viewBox="0 0 26 26"><path d="M2.5 2.5H18.5V14H8.5L5.5 17V14H2.5Z" fill="#fff"/><path d="M5 5.5H16M5 8H16M5 10.5H12" stroke="#2e2e2e" stroke-width="1"/><circle cx="17.8" cy="16.9" r="7.4" fill="#323232" stroke="#a8a8a8" stroke-width="1.3"/><text x="17.8" y="20.8" font-size="11" font-weight="bold" font-family="Liberation Sans,sans-serif" fill="#fff" text-anchor="middle">1</text></svg>
<div class="abs" style="left:1915px;top:1040px;width:1px;height:40px;background:#6a6a6a;"></div>
</div>
</body>
</html>
